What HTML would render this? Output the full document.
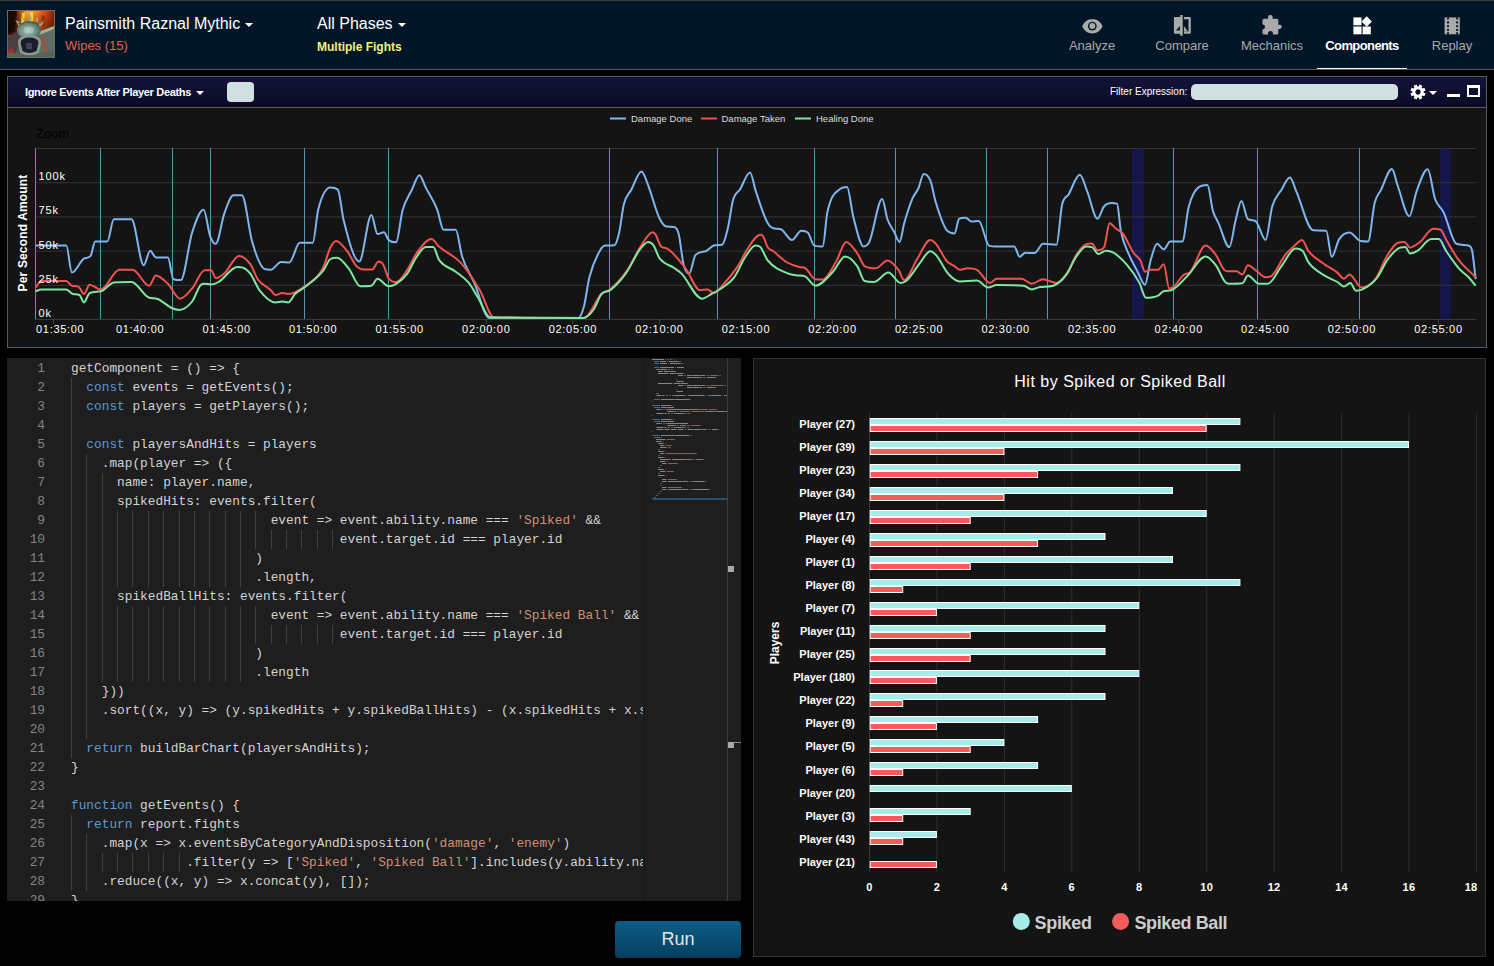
<!DOCTYPE html>
<html><head><meta charset="utf-8"><style>
html,body{margin:0;padding:0;background:#000;width:1494px;height:966px;overflow:hidden;position:relative;font-family:"Liberation Sans",sans-serif}
.t{position:absolute;white-space:nowrap}
.xl{font-size:11px;color:#fff;letter-spacing:0.7px;line-height:14px}
.yl{font-size:11px;color:#fff;letter-spacing:0.85px;line-height:14px}
.ln{position:absolute;left:7px;width:38px;text-align:right;font-family:"Liberation Mono",monospace;font-size:12.8px;line-height:19px;color:#858585;white-space:pre}
.cl{position:absolute;left:71px;font-family:"Liberation Mono",monospace;font-size:12.8px;line-height:19px;color:#d4d4d4;white-space:pre}
.k{color:#569cd6} .s{color:#ce9178}
.pl{font-size:11px;font-weight:bold;color:#fff;line-height:15px}
.al{font-size:11px;color:#fff;line-height:14px;font-weight:bold;letter-spacing:0.3px}
</style></head><body>

<div style="position:absolute;left:0;top:0;width:1494px;height:1px;background:#3a3a3a"></div>
<div style="position:absolute;left:0;top:1px;width:1494px;height:68px;background:#021628"></div>
<div style="position:absolute;left:0;top:69px;width:1494px;height:1px;background:#5a5a5a"></div>
<div style="position:absolute;left:7px;top:10px;width:46px;height:46px;border:1px solid #6a6a6a;overflow:hidden"><svg width="46" height="46" viewBox="0 0 46 46" style="position:absolute;left:0;top:0">
<defs>
<linearGradient id="fire" x1="0" y1="0" x2="1" y2="0">
<stop offset="0" stop-color="#1a0a08"/><stop offset="0.2" stop-color="#7a2a10"/><stop offset="0.4" stop-color="#ffb020"/><stop offset="0.55" stop-color="#ff9a18"/><stop offset="0.75" stop-color="#f05a10"/><stop offset="1" stop-color="#902008"/></linearGradient>
<linearGradient id="firev" x1="0" y1="0" x2="0" y2="1">
<stop offset="0" stop-color="#000" stop-opacity="0"/><stop offset="1" stop-color="#401008" stop-opacity="0.6"/></linearGradient>
<radialGradient id="helm" cx="0.45" cy="0.55" r="0.6"><stop offset="0" stop-color="#a8c4bc"/><stop offset="0.6" stop-color="#6e8c84"/><stop offset="1" stop-color="#445a52"/></radialGradient>
</defs>
<rect width="46" height="46" fill="#4a5850"/>
<rect x="0" y="0" width="46" height="24" fill="url(#fire)"/>
<rect x="0" y="0" width="46" height="24" fill="url(#firev)"/>
<path d="M14,2 L17,2 L16,12 L13,12Z" fill="#ffe030" opacity="0.85"/>
<path d="M22,1 L25,1 L25,10 L22,11Z" fill="#ffe840" opacity="0.8"/>
<path d="M34,4 L37,6 L36,16 L33,14Z" fill="#601808" opacity="0.5"/>
<path d="M0,26 L10,20 L14,24 L6,46 L0,46Z" fill="#4a4040"/>
<path d="M0,40 L4,36 L8,46 L0,46Z" fill="#b02828"/>
<path d="M30,22 L46,16 L46,46 L30,46Z" fill="#5e6e62"/>
<path d="M30,21 L46,15 L46,18 L31,24Z" fill="#a8b0a0"/>
<path d="M32,26 L36,26 L42,46 L38,46Z" fill="#a05040" opacity="0.8"/>
<path d="M9,12 L12,14 L11,16Z" fill="#c0b0a0"/>
<path d="M32,12 L30,16 L33,15Z" fill="#c0b0a0"/>
<path d="M21,6 L23,6 L22,12Z" fill="#a0a090"/>
<path d="M0,0 L9,0 L7,20 L0,22Z" fill="#140806" opacity="0.85"/>
<ellipse cx="21" cy="19" rx="12" ry="9" fill="url(#helm)"/>
<path d="M10,13 L7,9 L12,11Z M15,10 L14,5 L17,9Z M21,9 L22,3 L24,9Z M27,10 L30,5 L30,11Z M32,13 L36,9 L34,15Z" fill="#9aa898"/>
<path d="M12,14 Q21,8 31,14" fill="none" stroke="#3a4a40" stroke-width="1" opacity="0.6"/>
<path d="M16,17 Q21,14 26,17 L25,22 L17,22Z" fill="#c8e0da" opacity="0.4"/>
<path d="M10,32 Q10,24 21,24 Q33,24 33,32 L31,42 Q21,47 12,42 Z" fill="#8a9c90"/>
<path d="M12.5,32 Q13,26.5 21,26.5 Q30.5,26.5 30.5,32 L28.5,40 Q21,44 14.5,40 Z" fill="#1c1c2c"/>
<path d="M18,32 L24,32 L24,38 L18,38Z" fill="#4a4a5a" opacity="0.8"/>
<path d="M0,42 L12,42 Q21,47 31,42 L46,40 L46,46 L0,46Z" fill="#56645a"/>
</svg></div>
<div class="t" style="left:65px;top:14px;font-size:16px;color:#fff;line-height:19px">Painsmith Raznal Mythic</div>
<div style="position:absolute;left:245px;top:22.5px;width:0;height:0;border-left:4.0px solid transparent;border-right:4.0px solid transparent;border-top:4.5px solid #fff"></div>
<div class="t" style="left:65px;top:38px;font-size:13px;color:#e2633f;line-height:16px">Wipes (15)</div>
<div class="t" style="left:317px;top:14px;font-size:16px;color:#fff;line-height:19px">All Phases</div>
<div style="position:absolute;left:398px;top:22.5px;width:0;height:0;border-left:4.0px solid transparent;border-right:4.0px solid transparent;border-top:4.5px solid #fff"></div>
<div class="t" style="left:317px;top:39px;font-size:12px;font-weight:bold;color:#f0f27a;line-height:16px">Multiple Fights</div>
<div style="position:absolute;left:1092px;top:25.8px;width:0;height:0"><svg width="21" height="15" viewBox="0 0 21 15" style="position:absolute;left:-10.3px;top:-7.2px"><path d="M0.2,7.2 C2.5,2 6,0.2 10.3,0.2 C14.6,0.2 18.1,2 20.6,7.2 C18.1,12.4 14.6,14.4 10.3,14.4 C6,14.4 2.5,12.4 0.2,7.2Z" fill="#aaa"/><circle cx="10.3" cy="7.1" r="4.4" fill="#021628"/><circle cx="10.3" cy="7.1" r="3" fill="#aaa"/></svg></div><div class="t" style="left:1032px;top:38px;width:120px;text-align:center;font-size:13px;color:#a9a9a9;font-weight:normal;letter-spacing:0;line-height:16px">Analyze</div><div style="position:absolute;left:1182px;top:25.6px;width:0;height:0"><svg width="19" height="21" viewBox="0 0 19 21" style="position:absolute;left:-9px;top:-10.5px"><rect x="0.9" y="1.9" width="7.6" height="16.9" rx="1.3" fill="#aaa"/><path d="M3,15.6 L6.9,11 L6.9,15.6Z" fill="#021628"/><rect x="7.2" y="0" width="2.5" height="20.7" fill="#aaa"/><path d="M10.9,1.9 L16.5,1.9 Q17.8,1.9 17.8,3.2 L17.8,17.5 Q17.8,18.8 16.5,18.8 L10.9,18.8 L10.9,16.5 L15.5,16.5 L15.5,4.2 L10.9,4.2 Z" fill="#aaa"/><path d="M10.9,11 L14.8,16.5 L10.9,16.5Z" fill="#aaa"/></svg></div><div class="t" style="left:1122px;top:38px;width:120px;text-align:center;font-size:13px;color:#a9a9a9;font-weight:normal;letter-spacing:0;line-height:16px">Compare</div><div style="position:absolute;left:1272px;top:25.2px;width:0;height:0"><svg width="21" height="21" viewBox="0 0 21 21" style="position:absolute;left:-10px;top:-10px"><rect x="0.5" y="3.8" width="15.8" height="15.8" rx="1.5" fill="#aaa"/><rect x="6" y="0" width="4.7" height="5" rx="2.2" fill="#aaa"/><rect x="14" y="9.7" width="5.7" height="4.2" rx="1.8" fill="#aaa"/><circle cx="0.6" cy="12" r="2.4" fill="#021628"/><rect x="6" y="15.9" width="5" height="5" rx="2.5" fill="#021628"/></svg></div><div class="t" style="left:1212px;top:38px;width:120px;text-align:center;font-size:13px;color:#a9a9a9;font-weight:normal;letter-spacing:0;line-height:16px">Mechanics</div><div style="position:absolute;left:1362px;top:25.1px;width:0;height:0"><svg width="20" height="20" viewBox="0 0 20 20" style="position:absolute;left:-9.5px;top:-9.5px"><rect x="0.4" y="1.4" width="8.1" height="7.9" fill="#fff"/><path d="M13.7,0.3 L18.9,5.5 L13.7,10.7 L8.5,5.5Z" fill="#fff"/><rect x="0.4" y="10.5" width="8.1" height="7.8" fill="#fff"/><rect x="9.6" y="10.5" width="8.2" height="7.8" fill="#fff"/></svg></div><div class="t" style="left:1302px;top:38px;width:120px;text-align:center;font-size:13px;color:#fff;font-weight:bold;letter-spacing:-0.6px;line-height:16px">Components</div><div style="position:absolute;left:1452px;top:25.6px;width:0;height:0"><svg width="17" height="18" viewBox="0 0 17 18" style="position:absolute;left:-8px;top:-9px"><rect x="0.6" y="0.4" width="15.2" height="16.9" fill="#aaa"/><rect x="3" y="0.4" width="2" height="2" fill="#021628"/><rect x="12.1" y="0.4" width="2" height="2" fill="#021628"/><rect x="3" y="4.4" width="2" height="2" fill="#021628"/><rect x="12.1" y="4.4" width="2" height="2" fill="#021628"/><rect x="3" y="8.3" width="2" height="1.9" fill="#021628"/><rect x="12.1" y="8.3" width="2" height="1.9" fill="#021628"/><rect x="3" y="12" width="2" height="1.9" fill="#021628"/><rect x="12.1" y="12" width="2" height="1.9" fill="#021628"/><rect x="3" y="15.3" width="2" height="2" fill="#021628"/><rect x="12.1" y="15.3" width="2" height="2" fill="#021628"/></svg></div><div class="t" style="left:1392px;top:38px;width:120px;text-align:center;font-size:13px;color:#a9a9a9;font-weight:normal;letter-spacing:0;line-height:16px">Replay</div><div style="position:absolute;left:1317px;top:68px;width:90px;height:1px;background:#fff"></div>


<div style="position:absolute;left:7px;top:76px;width:1478px;height:270px;border:1px solid #5a5a5a;background:#141414"></div>
<div style="position:absolute;left:8px;top:77px;width:1478px;height:30px;background:linear-gradient(#13133a,#0b0b25)"></div>
<div style="position:absolute;left:8px;top:107px;width:1478px;height:1px;background:#5a5a5a"></div>
<div class="t" style="left:25px;top:85px;font-size:11px;font-weight:bold;color:#fff;letter-spacing:-0.33px;line-height:14px">Ignore Events After Player Deaths</div>
<div style="position:absolute;left:196px;top:91px;width:0;height:0;border-left:4.0px solid transparent;border-right:4.0px solid transparent;border-top:4px solid #fff"></div>
<div style="position:absolute;left:227px;top:82px;width:27px;height:20px;border-radius:4px;background:#cfdfe2"></div>
<div class="t" style="left:1110px;top:85px;font-size:10px;color:#fff;line-height:13px">Filter Expression:</div>
<div style="position:absolute;left:1191px;top:84px;width:207px;height:16px;border-radius:5px;background:#cfdfe2"></div>
<svg width="18" height="18" viewBox="-9 -9 18 18" style="position:absolute;left:1409px;top:82.5px;transform:rotate(22.5deg)"><path d="M5.36,-1.64 L7.53,-1.60 L7.53,1.60 L5.36,1.64 L4.94,2.63 L6.46,4.19 L4.19,6.46 L2.63,4.94 L1.64,5.36 L1.60,7.53 L-1.60,7.53 L-1.64,5.36 L-2.63,4.94 L-4.19,6.46 L-6.46,4.19 L-4.94,2.63 L-5.36,1.64 L-7.53,1.60 L-7.53,-1.60 L-5.36,-1.64 L-4.94,-2.63 L-6.46,-4.19 L-4.19,-6.46 L-2.63,-4.94 L-1.64,-5.36 L-1.60,-7.53 L1.60,-7.53 L1.64,-5.36 L2.63,-4.94 L4.19,-6.46 L6.46,-4.19 L4.94,-2.63Z" fill="#fff"/><circle r="2.6" fill="#0f0f2b"/></svg>
<div style="position:absolute;left:1429px;top:91px;width:0;height:0;border-left:4.0px solid transparent;border-right:4.0px solid transparent;border-top:4px solid #fff"></div>
<div style="position:absolute;left:1447px;top:94px;width:13px;height:3px;background:#fff"></div>
<div style="position:absolute;left:1467px;top:85px;width:9px;height:7px;border:2px solid #fff;border-top-width:3px"></div>
<div class="t" style="left:36px;top:126px;font-size:13px;color:#000;line-height:16px">Zoom</div>
<svg width="1494" height="360" style="position:absolute;left:0;top:0">
<rect x="1132" y="148" width="12" height="171" fill="#15154a"/><rect x="1440" y="148" width="11" height="171" fill="#15154a"/><line x1="35" y1="148.5" x2="1476" y2="148.5" stroke="#333" stroke-width="1"/><line x1="35" y1="182.7" x2="1476" y2="182.7" stroke="#333" stroke-width="1"/><line x1="35" y1="216.9" x2="1476" y2="216.9" stroke="#333" stroke-width="1"/><line x1="35" y1="251.1" x2="1476" y2="251.1" stroke="#333" stroke-width="1"/><line x1="35" y1="285.3" x2="1476" y2="285.3" stroke="#333" stroke-width="1"/><line x1="35" y1="319.5" x2="1476" y2="319.5" stroke="#3a3a3a" stroke-width="1"/><line x1="35.5" y1="148" x2="35.5" y2="319" stroke="#4f9ab1" stroke-width="1"/><line x1="100.5" y1="148" x2="100.5" y2="319" stroke="#4f9ab1" stroke-width="1"/><line x1="172.5" y1="148" x2="172.5" y2="319" stroke="#4f9ab1" stroke-width="1"/><line x1="210.5" y1="148" x2="210.5" y2="319" stroke="#4f9ab1" stroke-width="1"/><line x1="304.5" y1="148" x2="304.5" y2="319" stroke="#4f9ab1" stroke-width="1"/><line x1="388.5" y1="148" x2="388.5" y2="319" stroke="#4f9ab1" stroke-width="1"/><line x1="609.5" y1="148" x2="609.5" y2="319" stroke="#4f9ab1" stroke-width="1"/><line x1="717.5" y1="148" x2="717.5" y2="319" stroke="#4f9ab1" stroke-width="1"/><line x1="814.5" y1="148" x2="814.5" y2="319" stroke="#4f9ab1" stroke-width="1"/><line x1="895.5" y1="148" x2="895.5" y2="319" stroke="#4f9ab1" stroke-width="1"/><line x1="986.5" y1="148" x2="986.5" y2="319" stroke="#4f9ab1" stroke-width="1"/><line x1="1047.5" y1="148" x2="1047.5" y2="319" stroke="#4f9ab1" stroke-width="1"/><line x1="1173.5" y1="148" x2="1173.5" y2="319" stroke="#4f9ab1" stroke-width="1"/><line x1="1257.5" y1="148" x2="1257.5" y2="319" stroke="#4f9ab1" stroke-width="1"/><line x1="1359.5" y1="148" x2="1359.5" y2="319" stroke="#4f9ab1" stroke-width="1"/><line x1="53.5" y1="319" x2="53.5" y2="324" stroke="#444" stroke-width="1"/><line x1="140.1" y1="319" x2="140.1" y2="324" stroke="#444" stroke-width="1"/><line x1="226.6" y1="319" x2="226.6" y2="324" stroke="#444" stroke-width="1"/><line x1="313.2" y1="319" x2="313.2" y2="324" stroke="#444" stroke-width="1"/><line x1="399.7" y1="319" x2="399.7" y2="324" stroke="#444" stroke-width="1"/><line x1="486.3" y1="319" x2="486.3" y2="324" stroke="#444" stroke-width="1"/><line x1="572.9" y1="319" x2="572.9" y2="324" stroke="#444" stroke-width="1"/><line x1="659.4" y1="319" x2="659.4" y2="324" stroke="#444" stroke-width="1"/><line x1="746.0" y1="319" x2="746.0" y2="324" stroke="#444" stroke-width="1"/><line x1="832.5" y1="319" x2="832.5" y2="324" stroke="#444" stroke-width="1"/><line x1="919.1" y1="319" x2="919.1" y2="324" stroke="#444" stroke-width="1"/><line x1="1005.7" y1="319" x2="1005.7" y2="324" stroke="#444" stroke-width="1"/><line x1="1092.2" y1="319" x2="1092.2" y2="324" stroke="#444" stroke-width="1"/><line x1="1178.8" y1="319" x2="1178.8" y2="324" stroke="#444" stroke-width="1"/><line x1="1265.3" y1="319" x2="1265.3" y2="324" stroke="#444" stroke-width="1"/><line x1="1351.9" y1="319" x2="1351.9" y2="324" stroke="#444" stroke-width="1"/><line x1="1438.5" y1="319" x2="1438.5" y2="324" stroke="#444" stroke-width="1"/>
<path d="M35.6,245.6C45.8,245.6 56.1,245.6 66.3,245.6C68.2,245.6 70.0,272.6 71.9,272.6C75.9,272.6 80.0,260.8 84.0,258.7C86.2,257.6 88.4,258.5 90.6,255.9C92.1,254.1 93.7,241.5 95.2,241.5C99.2,241.5 103.3,241.5 107.3,241.5C109.5,241.5 111.6,219.2 113.8,219.2C119.7,219.2 125.6,219.2 131.5,219.2C135.6,219.2 139.6,265.2 143.7,265.2C145.9,265.2 148.0,250.8 150.2,250.8C152.1,250.8 153.9,257.4 155.8,257.4C159.8,257.4 163.9,257.4 167.9,257.4C169.8,257.4 171.6,278.5 173.5,279.2C176.0,280.1 178.4,280.1 180.9,280.1C184.6,280.1 188.4,244.2 192.1,232.6C196.0,220.6 199.8,209.8 203.7,209.8C205.9,209.8 208.0,230.4 210.2,236.3C212.1,241.4 213.9,243.8 215.8,243.8C218.6,243.8 221.4,221.7 224.2,213.9C227.3,205.3 230.4,195.3 233.5,195.3C236.3,195.3 239.1,195.3 241.9,195.3C245.3,195.3 248.8,230.3 252.2,241.9C256.2,255.5 260.3,267.2 264.3,268.9C266.5,269.8 268.6,269.8 270.8,269.8C274.2,269.8 277.6,262.0 281.0,262.0C283.8,262.0 286.6,262.4 289.4,262.4C292.8,262.4 296.3,242.8 299.7,242.8C304.0,242.8 308.4,242.8 312.7,242.8C314.6,242.8 316.4,216.6 318.3,209.3C322.3,193.6 326.4,187.5 330.4,187.5C332.9,187.5 335.4,187.5 337.9,189.7C339.8,191.3 341.6,212.1 343.5,219.5C348.8,240.5 354.0,261.5 359.3,261.5C363.3,261.5 367.4,214.9 371.4,214.9C373.4,214.9 375.5,234.1 377.5,234.1C379.7,234.1 381.8,232.2 384.0,232.2C385.5,232.2 387.1,238.6 388.6,240.0C391.1,242.3 393.6,242.3 396.1,242.3C398.3,242.3 400.4,217.9 402.6,210.2C405.7,199.1 408.8,196.1 411.9,189.7C414.4,184.5 416.9,175.2 419.4,175.2C421.6,175.2 423.7,183.7 425.9,187.9C429.6,195.1 433.4,199.8 437.1,209.3C439.3,214.8 441.4,229.8 443.6,229.8C447.6,229.8 451.7,229.8 455.7,229.8C457.9,229.8 460.0,250.0 462.2,256.8C466.2,269.5 470.3,273.8 474.3,282.9C479.3,294.1 484.2,317.9 489.2,317.9C518.9,317.9 548.5,317.9 578.2,317.9C580.1,317.9 581.9,313.9 583.8,307.1C585.7,300.3 587.5,284.7 589.4,277.3C592.8,263.9 596.2,257.2 599.6,251.2C601.5,247.9 603.3,245.7 605.2,245.6C608.3,245.5 611.4,245.6 614.5,245.2C616.1,245.0 617.6,239.5 619.2,232.6C620.7,225.9 622.3,210.8 623.8,204.6C626.3,194.5 628.8,194.4 631.3,189.7C634.7,183.3 638.1,171.5 641.5,171.5C643.7,171.5 645.9,179.6 648.1,185.1C651.8,194.3 655.5,210.1 659.2,217.7C661.7,222.9 664.2,226.4 666.7,226.6C669.2,226.8 671.7,226.7 674.2,227.0C675.7,227.2 677.3,228.3 678.8,234.4C680.4,240.6 681.9,257.9 683.5,264.2C685.4,271.7 687.2,273.6 689.1,273.6C691.3,273.6 693.4,257.1 695.6,254.9C699.0,251.4 702.4,252.3 705.8,251.2C708.8,250.2 711.7,245.3 714.7,245.2C717.2,245.1 719.6,245.2 722.1,244.7C724.0,244.3 725.8,236.4 727.7,228.8C729.6,221.2 731.4,205.3 733.3,199.0C735.5,191.7 737.6,193.0 739.8,189.7C743.2,184.4 746.7,172.6 750.1,172.6C751.9,172.6 753.8,185.1 755.6,190.6C759.7,202.7 763.7,216.2 767.8,223.3C770.0,227.1 772.1,228.0 774.3,228.5C776.5,229.0 778.6,228.7 780.8,229.2C784.5,230.1 788.3,240.0 792.0,240.0C795.1,240.0 798.2,230.7 801.3,230.7C803.5,230.7 805.6,230.7 807.8,232.6C810.0,234.5 812.1,244.9 814.3,245.6C817.1,246.5 819.9,246.5 822.7,246.5C824.3,246.5 825.8,219.2 827.4,212.1C831.7,192.4 836.1,192.5 840.4,188.8C842.6,186.9 844.8,186.9 847.0,186.9C849.2,186.9 851.3,209.5 853.5,217.7C856.9,230.6 860.3,246.5 863.7,246.5C865.6,246.5 867.4,245.8 869.3,241.9C873.6,233.0 877.9,199.0 882.2,199.0C884.0,199.0 885.7,214.4 887.5,219.5C889.7,225.7 891.8,227.6 894.0,231.6C895.9,235.1 897.7,241.9 899.6,241.9C901.1,241.9 902.7,228.7 904.2,223.3C907.0,213.4 909.8,204.6 912.6,198.1C914.5,193.7 916.3,192.8 918.2,188.8C920.1,184.8 921.9,173.9 923.8,173.9C926.0,173.9 928.1,175.0 930.3,180.4C932.2,185.1 934.0,196.7 935.9,202.8C939.6,214.9 943.4,226.5 947.1,230.7C949.6,233.5 952.0,233.5 954.5,233.5C956.1,233.5 957.6,219.3 959.2,218.6C961.4,217.7 963.5,217.7 965.7,217.7C967.6,217.7 969.4,221.4 971.3,221.4C973.8,221.4 976.3,221.0 978.8,221.0C982.2,221.0 985.6,244.4 989.0,245.6C991.5,246.5 994.0,246.5 996.5,246.5C1002.4,246.5 1008.3,246.5 1014.2,246.5C1016.0,246.5 1017.9,256.8 1019.7,256.8C1021.6,256.8 1023.4,252.7 1025.3,252.7C1028.4,252.7 1031.5,253.1 1034.6,253.1C1037.4,253.1 1040.2,243.8 1043.0,243.8C1047.5,243.8 1052.0,244.7 1056.5,244.7C1058.4,244.7 1060.2,212.7 1062.1,204.6C1064.3,195.1 1066.4,198.0 1068.6,194.4C1072.3,188.2 1076.1,174.8 1079.8,174.8C1082.3,174.8 1084.8,185.5 1087.3,191.6C1090.7,199.9 1094.1,218.6 1097.5,218.6C1099.7,218.6 1101.8,209.0 1104.0,206.5C1106.5,203.6 1109.0,203.1 1111.5,203.1C1113.4,203.1 1115.2,203.1 1117.1,203.7C1118.3,204.1 1119.6,224.4 1120.8,230.7C1123.3,243.6 1125.8,246.9 1128.3,253.1C1131.4,260.8 1134.5,265.9 1137.6,271.7C1140.1,276.3 1142.5,284.7 1145.0,284.7C1146.9,284.7 1148.7,266.9 1150.6,260.5C1152.8,253.0 1154.9,243.8 1157.1,243.8C1159.3,243.8 1161.5,249.3 1163.7,249.3C1165.9,249.3 1168.0,241.5 1170.2,241.5C1174.2,241.5 1178.3,241.5 1182.3,241.5C1184.5,241.5 1186.6,214.4 1188.8,206.5C1192.2,194.0 1195.7,189.1 1199.1,186.9C1201.9,185.1 1204.6,185.1 1207.4,185.1C1209.3,185.1 1211.1,204.7 1213.0,211.1C1214.9,217.5 1216.7,219.2 1218.6,223.3C1222.2,231.2 1225.7,247.1 1229.3,247.1C1231.5,247.1 1233.6,227.7 1235.8,219.5C1237.7,212.4 1239.5,200.9 1241.4,200.9C1243.6,200.9 1245.7,217.9 1247.9,219.2C1250.4,220.7 1252.9,220.0 1255.4,221.0C1258.8,222.4 1262.2,240.0 1265.6,240.0C1267.8,240.0 1270.0,214.1 1272.2,206.5C1275.3,195.8 1278.4,194.7 1281.5,189.7C1284.3,185.2 1287.1,177.6 1289.9,177.6C1292.1,177.6 1294.2,186.8 1296.4,191.6C1302.0,204.1 1307.6,230.1 1313.2,230.3C1317.5,230.5 1321.9,230.3 1326.2,230.7C1328.1,230.9 1329.9,256.8 1331.8,256.8C1334.3,256.8 1336.7,242.8 1339.2,239.1C1342.6,233.9 1346.1,232.6 1349.5,232.6C1353.2,232.6 1356.9,240.3 1360.6,241.0C1363.1,241.5 1365.6,241.5 1368.1,241.5C1370.3,241.5 1372.5,211.5 1374.7,202.8C1376.8,194.4 1379.0,193.9 1381.1,189.7C1384.7,182.5 1388.3,168.9 1391.9,168.9C1393.9,168.9 1395.8,180.6 1397.8,186.0C1401.7,196.6 1405.5,216.2 1409.4,216.2C1411.8,216.2 1414.1,198.1 1416.5,191.6C1420.2,181.4 1424.0,169.2 1427.7,169.2C1430.2,169.2 1432.6,192.1 1435.1,199.0C1437.9,206.8 1440.7,206.5 1443.5,212.1C1447.8,220.8 1452.2,242.1 1456.5,243.8C1460.5,245.3 1464.6,244.8 1468.6,245.6C1469.7,245.8 1470.9,245.6 1472.0,250.3C1473.2,255.4 1474.5,269.6 1475.7,279.2" fill="none" stroke="#7eb6ee" stroke-width="2" stroke-linejoin="round"/>
<path d="M35.6,287.5C37.5,285.3 39.3,281.0 41.2,281.0C49.6,281.0 57.9,281.0 66.3,281.0C68.2,281.0 70.0,285.3 71.9,285.7C74.1,286.2 76.2,285.9 78.4,286.6C80.3,287.2 82.1,294.0 84.0,294.0C85.9,294.0 87.7,284.7 89.6,284.7C93.3,284.7 97.1,289.4 100.8,289.4C107.0,289.4 113.2,269.8 119.4,269.8C123.8,269.8 128.1,269.8 132.5,269.8C138.1,269.8 143.6,285.7 149.2,285.7C151.4,285.7 153.6,275.4 155.8,275.4C159.8,275.4 163.9,279.9 167.9,283.8C171.9,287.7 176.0,298.7 180.0,298.7C184.0,298.7 188.1,293.1 192.1,288.5C196.3,283.7 200.5,270.2 204.7,270.2C206.9,270.2 209.0,270.2 211.2,270.2C212.7,270.2 214.3,278.2 215.8,278.2C218.6,278.2 221.4,276.0 224.2,273.6C229.2,269.3 234.1,255.9 239.1,255.9C242.8,255.9 246.6,259.1 250.3,264.2C252.8,267.6 255.3,275.6 257.8,279.2C262.1,285.4 266.5,286.3 270.8,290.3C272.4,291.8 273.9,295.0 275.5,295.0C277.7,295.0 279.8,293.1 282.0,293.1C284.2,293.1 286.3,294.0 288.5,294.0C293.8,294.0 299.0,290.5 304.3,286.6C310.5,282.0 316.8,279.7 323.0,268.0C325.5,263.4 327.9,252.3 330.4,247.5C332.3,243.8 334.1,241.0 336.0,241.0C339.7,241.0 343.5,246.5 347.2,251.2C350.3,255.1 353.4,262.9 356.5,266.1C359.0,268.7 361.5,269.5 364.0,269.5C366.8,269.5 369.5,269.5 372.3,269.5C374.3,269.5 376.4,261.5 378.4,261.5C379.9,261.5 381.5,261.8 383.0,264.2C384.9,267.1 386.7,275.4 388.6,278.2C391.1,282.0 393.6,282.0 396.1,282.0C399.8,282.0 403.6,275.2 407.3,269.8C410.4,265.3 413.5,257.3 416.6,253.1C421.6,246.3 426.5,239.1 431.5,239.1C434.0,239.1 436.4,244.3 438.9,246.5C446.4,253.0 453.8,255.1 461.3,263.3C467.5,270.1 473.7,279.8 479.9,290.3C484.6,298.2 489.2,317.2 493.9,317.3C523.9,317.9 553.8,317.9 583.8,317.9C589.7,317.9 595.6,299.6 601.5,294.0C604.3,291.3 607.1,291.7 609.9,289.4C615.8,284.5 621.7,278.4 627.6,269.8C631.9,263.5 636.3,252.9 640.6,246.5C644.6,240.5 648.7,232.2 652.7,232.2C653.6,232.2 654.6,233.0 655.5,234.4C657.4,237.2 659.2,244.8 661.1,246.5C663.0,248.2 664.8,247.5 666.7,248.4C672.9,251.5 679.1,260.1 685.3,268.0C690.3,274.3 695.2,290.3 700.2,290.3C702.7,290.3 705.2,289.4 707.7,289.4C709.7,289.4 711.7,293.1 713.7,293.1C716.8,293.1 719.9,288.0 723.0,284.7C728.0,279.4 732.9,273.6 737.9,266.1C741.0,261.3 744.2,253.8 747.3,249.3C751.6,243.0 756.0,234.8 760.3,234.8C761.2,234.8 762.2,234.9 763.1,236.3C764.7,238.6 766.2,245.1 767.8,247.5C769.7,250.3 771.5,249.8 773.4,251.2C777.7,254.4 782.1,259.4 786.4,262.0C790.7,264.6 795.1,266.1 799.4,267.0C801.3,267.4 803.1,267.1 805.0,268.0C808.4,269.7 811.9,278.8 815.3,279.2C817.8,279.5 820.2,279.5 822.7,279.5C827.4,279.5 832.0,268.3 836.7,260.5C839.8,255.3 842.9,241.9 846.0,241.9C849.7,241.9 853.5,248.0 857.2,253.1C859.7,256.5 862.1,264.6 864.6,266.1C868.3,268.3 872.1,268.3 875.8,268.3C879.7,268.3 883.6,260.5 887.5,260.5C891.2,260.5 894.9,265.3 898.6,270.2C900.5,272.7 902.3,280.1 904.2,280.1C908.6,280.1 912.9,265.4 917.3,258.7C921.6,252.0 926.0,240.0 930.3,240.0C932.2,240.0 934.0,241.7 935.9,243.8C939.6,248.0 943.4,257.4 947.1,261.5C949.6,264.2 952.0,264.5 954.5,266.1C956.4,267.3 958.2,269.8 960.1,269.8C962.6,269.8 965.1,268.3 967.6,268.3C970.7,268.3 973.8,268.3 976.9,269.8C981.3,271.9 985.6,282.9 990.0,282.9C992.2,282.9 994.3,278.8 996.5,278.8C1004.9,278.8 1013.2,278.8 1021.6,278.8C1025.0,278.8 1028.5,283.8 1031.9,283.8C1035.6,283.8 1039.3,279.2 1043.0,279.2C1047.5,279.2 1052.0,282.9 1056.5,282.9C1060.5,282.9 1064.6,278.2 1068.6,271.7C1070.5,268.7 1072.3,262.0 1074.2,258.7C1077.9,252.0 1081.7,246.9 1085.4,244.7C1087.6,243.4 1089.7,243.4 1091.9,243.4C1093.8,243.4 1095.6,250.3 1097.5,250.3C1099.7,250.3 1101.8,250.3 1104.0,247.5C1105.9,245.1 1107.7,223.3 1109.6,223.3C1111.8,223.3 1113.9,227.1 1116.1,228.8C1118.3,230.5 1120.5,230.8 1122.7,233.5C1126.4,238.1 1130.1,247.8 1133.8,253.1C1136.0,256.3 1138.2,256.6 1140.4,260.5C1141.9,263.2 1143.5,271.7 1145.0,271.7C1146.9,271.7 1148.7,269.8 1150.6,269.8C1153.1,269.8 1155.6,269.8 1158.1,269.8C1160.0,269.8 1161.8,264.2 1163.7,264.2C1165.5,264.2 1167.4,288.5 1169.2,288.5C1170.8,288.5 1172.3,287.8 1173.9,286.6C1177.3,283.9 1180.8,276.6 1184.2,274.5C1186.0,273.4 1187.9,274.1 1189.7,272.6C1195.0,268.2 1200.3,245.6 1205.6,245.6C1209.0,245.6 1212.4,250.3 1215.8,254.9C1218.6,258.7 1221.4,266.7 1224.2,269.8C1225.3,271.0 1226.4,271.3 1227.5,271.3C1230.6,271.3 1233.7,271.3 1236.8,271.3C1238.7,271.3 1240.5,274.5 1242.4,274.5C1244.2,274.5 1246.1,265.2 1247.9,265.2C1251.0,265.2 1254.2,269.6 1257.3,271.7C1260.1,273.6 1262.8,277.3 1265.6,277.3C1267.8,277.3 1270.0,277.3 1272.2,275.4C1276.5,271.7 1280.9,260.5 1285.2,254.9C1288.3,250.9 1291.4,248.3 1294.5,245.6C1297.0,243.4 1299.5,240.0 1302.0,240.0C1304.2,240.0 1306.3,248.4 1308.5,251.2C1313.8,257.9 1319.0,260.3 1324.3,264.2C1328.7,267.4 1333.0,269.1 1337.4,272.6C1339.6,274.3 1341.7,278.8 1343.9,278.8C1345.8,278.8 1347.6,274.5 1349.5,274.5C1353.5,274.5 1357.5,287.5 1361.5,287.5C1366.2,287.5 1370.8,285.3 1375.5,279.2C1379.2,274.3 1383.0,262.5 1386.7,256.4C1390.4,250.4 1394.1,244.3 1397.8,242.8C1400.0,241.9 1402.2,241.9 1404.4,241.9C1406.3,241.9 1408.1,247.5 1410.0,247.5C1413.4,247.5 1416.8,244.5 1420.2,241.9C1424.5,238.5 1428.9,228.8 1433.2,228.8C1435.7,228.8 1438.2,228.8 1440.7,229.8C1442.6,230.5 1444.4,236.8 1446.3,240.0C1450.3,246.9 1454.4,254.3 1458.4,259.6C1464.2,267.2 1469.9,271.4 1475.7,277.3" fill="none" stroke="#f0524d" stroke-width="2" stroke-linejoin="round"/>
<path d="M35.6,291.3C37.5,290.7 39.3,289.4 41.2,289.4C49.6,289.4 57.9,289.4 66.3,289.4C68.5,289.4 70.7,293.6 72.9,294.0C75.1,294.4 77.2,294.1 79.4,295.0C80.9,295.6 82.5,302.4 84.0,302.4C85.9,302.4 87.7,293.9 89.6,293.1C93.3,291.5 97.1,292.1 100.8,291.3C105.1,290.4 109.5,282.9 113.8,282.5C119.7,282.0 125.6,282.0 131.5,282.0C137.4,282.0 143.3,296.1 149.2,297.8C151.7,298.5 154.2,298.2 156.7,298.7C161.7,299.8 166.6,305.8 171.6,308.0C174.1,309.1 176.6,309.9 179.1,309.9C183.4,309.9 187.8,306.9 192.1,301.5C195.2,297.6 198.3,286.1 201.4,284.4C202.5,283.8 203.6,283.8 204.7,283.8C206.9,283.8 209.0,284.4 211.2,284.4C213.7,284.4 216.1,283.4 218.6,282.0C224.8,278.5 231.1,267.0 237.3,267.0C239.2,267.0 241.0,267.0 242.9,267.6C245.4,268.4 247.8,270.4 250.3,273.6C253.4,277.6 256.5,286.3 259.6,290.3C264.9,297.1 270.2,302.4 275.5,302.4C277.7,302.4 279.8,301.5 282.0,301.5C284.2,301.5 286.3,302.4 288.5,302.4C290.7,302.4 292.8,296.2 295.0,294.0C298.1,290.9 301.2,290.0 304.3,287.5C310.5,282.5 316.8,278.6 323.0,270.8C325.5,267.7 327.9,260.5 330.4,259.0C332.6,257.7 334.8,257.7 337.0,257.7C341.0,257.7 345.0,263.9 349.0,268.9C352.7,273.5 356.5,286.2 360.2,286.2C363.9,286.2 367.7,286.2 371.4,285.7C373.4,285.4 375.5,278.8 377.5,278.8C381.2,278.8 384.9,286.2 388.6,286.2C391.1,286.2 393.6,285.3 396.1,283.8C399.8,281.5 403.6,278.7 407.3,273.6C410.4,269.4 413.5,261.2 416.6,256.8C419.7,252.4 422.8,247.1 425.9,247.1C428.4,247.1 430.8,247.1 433.3,247.1C435.2,247.1 437.0,256.8 438.9,259.6C444.5,267.9 450.1,267.3 455.7,271.7C460.1,275.1 464.4,277.5 468.8,282.9C471.9,286.7 475.0,292.8 478.1,297.8C482.1,304.3 486.2,317.2 490.2,317.3C521.4,317.9 552.6,317.9 583.8,317.9C587.2,317.9 590.6,313.9 594.0,309.0C596.5,305.4 599.0,296.8 601.5,294.0C604.3,290.8 607.1,292.2 609.9,290.3C615.2,286.7 620.4,280.8 625.7,273.6C630.7,266.8 635.6,254.8 640.6,248.4C643.1,245.2 645.6,241.9 648.1,241.9C650.0,241.9 651.8,242.9 653.7,245.6C655.5,248.2 657.4,255.1 659.2,257.7C664.2,264.9 669.2,264.4 674.2,268.0C676.7,269.8 679.1,271.2 681.6,273.6C688.4,280.4 695.3,298.7 702.1,298.7C705.2,298.7 708.3,295.7 711.4,294.0C714.7,292.3 717.9,290.8 721.2,288.5C725.5,285.4 729.9,283.1 734.2,277.3C737.9,272.3 741.7,262.3 745.4,256.8C748.8,251.8 752.2,245.6 755.6,245.6C757.2,245.6 758.7,245.6 760.3,247.1C762.8,249.5 765.3,257.5 767.8,260.5C774.6,268.8 781.5,270.8 788.3,273.6C791.4,274.9 794.5,275.0 797.6,275.4C800.1,275.7 802.5,275.4 805.0,276.4C808.4,277.7 811.9,285.7 815.3,285.7C821.2,285.7 827.1,277.8 833.0,271.7C837.0,267.6 841.1,256.4 845.1,256.4C849.1,256.4 853.2,260.4 857.2,266.1C859.7,269.6 862.1,280.2 864.6,281.0C867.7,282.0 870.9,282.0 874.0,282.0C878.8,282.0 883.6,272.6 888.4,272.6C892.4,272.6 896.5,282.9 900.5,282.9C902.4,282.9 904.2,282.5 906.1,281.0C910.4,277.5 914.8,269.5 919.1,264.2C922.8,259.6 926.6,251.2 930.3,251.2C932.2,251.2 934.0,252.9 935.9,254.9C940.2,259.6 944.6,269.9 948.9,274.5C952.6,278.5 956.4,281.4 960.1,281.4C965.7,281.4 971.3,280.6 976.9,280.6C980.6,280.6 984.4,287.5 988.1,287.5C990.9,287.5 993.7,285.1 996.5,285.1C1005.5,285.1 1014.5,285.1 1023.5,285.7C1026.3,285.9 1029.1,289.4 1031.9,289.4C1034.7,289.4 1037.4,287.3 1040.2,287.0C1044.6,286.5 1048.9,286.9 1053.3,285.7C1057.8,284.5 1062.3,279.7 1066.8,273.6C1069.9,269.4 1073.0,261.2 1076.1,256.8C1079.5,252.0 1082.9,246.5 1086.3,246.5C1088.2,246.5 1090.0,246.5 1091.9,247.1C1094.1,247.8 1096.2,254.0 1098.4,254.0C1100.9,254.0 1103.4,250.8 1105.9,250.8C1108.4,250.8 1110.9,251.3 1113.4,252.7C1117.7,255.2 1122.1,259.2 1126.4,264.2C1130.7,269.2 1135.1,274.9 1139.4,282.9C1141.6,287.0 1143.8,297.8 1146.0,297.8C1150.0,297.8 1154.1,297.5 1158.1,295.6C1160.0,294.7 1161.8,291.8 1163.7,291.3C1166.2,290.6 1168.6,291.0 1171.1,290.3C1176.7,288.6 1182.3,280.9 1187.9,275.4C1193.8,269.6 1199.7,256.4 1205.6,256.4C1209.0,256.4 1212.4,260.7 1215.8,265.2C1218.9,269.3 1222.0,278.4 1225.1,281.9C1226.5,283.5 1227.9,283.8 1229.3,283.8C1233.7,283.8 1238.0,283.8 1242.4,283.3C1244.2,283.1 1246.1,275.4 1247.9,275.4C1251.6,275.4 1255.4,283.8 1259.1,283.8C1261.9,283.8 1264.7,283.8 1267.5,283.8C1272.2,283.8 1276.8,272.0 1281.5,266.1C1286.2,260.2 1290.8,248.4 1295.5,248.4C1298.0,248.4 1300.4,248.4 1302.9,251.2C1304.8,253.3 1306.6,259.8 1308.5,262.4C1313.8,269.8 1319.0,271.9 1324.3,275.4C1328.7,278.3 1333.0,279.4 1337.4,282.0C1339.6,283.3 1341.7,286.6 1343.9,286.6C1346.0,286.6 1348.2,282.9 1350.3,282.9C1352.2,282.9 1354.0,290.7 1355.9,290.7C1358.1,290.7 1360.2,290.5 1362.4,289.4C1367.4,286.9 1372.4,283.7 1377.4,277.3C1380.8,273.0 1384.2,264.1 1387.6,259.6C1391.9,253.8 1396.3,248.6 1400.6,247.5C1402.2,247.1 1403.7,247.1 1405.3,247.1C1406.9,247.1 1408.4,253.4 1410.0,253.4C1412.5,253.4 1414.9,252.3 1417.4,250.8C1422.1,248.0 1426.7,239.1 1431.4,239.1C1433.9,239.1 1436.3,239.1 1438.8,239.1C1441.3,239.1 1443.8,247.5 1446.3,251.2C1450.6,257.6 1455.0,264.0 1459.3,268.9C1462.4,272.4 1465.5,274.1 1468.6,277.3C1471.0,279.8 1473.3,282.9 1475.7,285.7" fill="none" stroke="#80e6a0" stroke-width="2" stroke-linejoin="round"/>
<line x1="610" y1="118.5" x2="626" y2="118.5" stroke="#7eb6ee" stroke-width="2"/>
<line x1="701" y1="118.5" x2="717" y2="118.5" stroke="#f0524d" stroke-width="2"/>
<line x1="795" y1="118.5" x2="811" y2="118.5" stroke="#80e6a0" stroke-width="2"/>
</svg>
<div style="position:absolute;left:8px;top:346px;width:1478px;height:1px;background:#021628"></div>
<div class="t" style="left:631px;top:111.5px;font-size:9.5px;color:#ddd;line-height:13px">Damage Done</div>
<div class="t" style="left:721.5px;top:111.5px;font-size:9.5px;color:#ddd;line-height:13px">Damage Taken</div>
<div class="t" style="left:816px;top:111.5px;font-size:9.5px;color:#ddd;line-height:13px">Healing Done</div>
<div class="t" style="left:23px;top:233px;width:0;height:0"><div style="position:absolute;left:-60px;top:-8px;width:120px;text-align:center;transform:rotate(-90deg);font-size:12px;font-weight:bold;color:#fff;letter-spacing:0.15px;line-height:16px;white-space:nowrap">Per Second Amount</div></div>
<div class="t yl" style="left:38.5px;top:169.2px">100k</div><div class="t yl" style="left:38.5px;top:203.4px">75k</div><div class="t yl" style="left:38.5px;top:237.6px">50k</div><div class="t yl" style="left:38.5px;top:271.8px">25k</div><div class="t yl" style="left:38.5px;top:306.0px">0k</div><div class="t xl" style="left:36px;top:322px">01:35:00</div><div class="t xl" style="left:100.1px;top:322px;width:80px;text-align:center">01:40:00</div><div class="t xl" style="left:186.6px;top:322px;width:80px;text-align:center">01:45:00</div><div class="t xl" style="left:273.2px;top:322px;width:80px;text-align:center">01:50:00</div><div class="t xl" style="left:359.7px;top:322px;width:80px;text-align:center">01:55:00</div><div class="t xl" style="left:446.3px;top:322px;width:80px;text-align:center">02:00:00</div><div class="t xl" style="left:532.9px;top:322px;width:80px;text-align:center">02:05:00</div><div class="t xl" style="left:619.4px;top:322px;width:80px;text-align:center">02:10:00</div><div class="t xl" style="left:706.0px;top:322px;width:80px;text-align:center">02:15:00</div><div class="t xl" style="left:792.5px;top:322px;width:80px;text-align:center">02:20:00</div><div class="t xl" style="left:879.1px;top:322px;width:80px;text-align:center">02:25:00</div><div class="t xl" style="left:965.7px;top:322px;width:80px;text-align:center">02:30:00</div><div class="t xl" style="left:1052.2px;top:322px;width:80px;text-align:center">02:35:00</div><div class="t xl" style="left:1138.8px;top:322px;width:80px;text-align:center">02:40:00</div><div class="t xl" style="left:1225.3px;top:322px;width:80px;text-align:center">02:45:00</div><div class="t xl" style="left:1311.9px;top:322px;width:80px;text-align:center">02:50:00</div><div class="t xl" style="left:1398.5px;top:322px;width:80px;text-align:center">02:55:00</div>


<div style="position:absolute;left:7px;top:358px;width:734px;height:543px;background:#1e1e1e;overflow:hidden">
</div>
<div style="position:absolute;left:644px;top:358px;width:1px;height:543px;background:#171717"></div>
<div style="position:absolute;left:71.0px;top:378px;width:1px;height:19px;background:#404040"></div><div style="position:absolute;left:71.0px;top:397px;width:1px;height:19px;background:#404040"></div><div style="position:absolute;left:71.0px;top:416px;width:1px;height:19px;background:#404040"></div><div style="position:absolute;left:71.0px;top:435px;width:1px;height:19px;background:#404040"></div><div style="position:absolute;left:71.0px;top:454px;width:1px;height:19px;background:#404040"></div><div style="position:absolute;left:86.4px;top:454px;width:1px;height:19px;background:#404040"></div><div style="position:absolute;left:71.0px;top:473px;width:1px;height:19px;background:#404040"></div><div style="position:absolute;left:86.4px;top:473px;width:1px;height:19px;background:#404040"></div><div style="position:absolute;left:101.7px;top:473px;width:1px;height:19px;background:#404040"></div><div style="position:absolute;left:71.0px;top:492px;width:1px;height:19px;background:#404040"></div><div style="position:absolute;left:86.4px;top:492px;width:1px;height:19px;background:#404040"></div><div style="position:absolute;left:101.7px;top:492px;width:1px;height:19px;background:#404040"></div><div style="position:absolute;left:71.0px;top:511px;width:1px;height:19px;background:#404040"></div><div style="position:absolute;left:86.4px;top:511px;width:1px;height:19px;background:#404040"></div><div style="position:absolute;left:101.7px;top:511px;width:1px;height:19px;background:#404040"></div><div style="position:absolute;left:117.1px;top:511px;width:1px;height:19px;background:#404040"></div><div style="position:absolute;left:132.4px;top:511px;width:1px;height:19px;background:#404040"></div><div style="position:absolute;left:147.8px;top:511px;width:1px;height:19px;background:#404040"></div><div style="position:absolute;left:163.2px;top:511px;width:1px;height:19px;background:#404040"></div><div style="position:absolute;left:178.5px;top:511px;width:1px;height:19px;background:#404040"></div><div style="position:absolute;left:193.9px;top:511px;width:1px;height:19px;background:#404040"></div><div style="position:absolute;left:209.2px;top:511px;width:1px;height:19px;background:#404040"></div><div style="position:absolute;left:224.6px;top:511px;width:1px;height:19px;background:#404040"></div><div style="position:absolute;left:240.0px;top:511px;width:1px;height:19px;background:#404040"></div><div style="position:absolute;left:255.3px;top:511px;width:1px;height:19px;background:#404040"></div><div style="position:absolute;left:71.0px;top:530px;width:1px;height:19px;background:#404040"></div><div style="position:absolute;left:86.4px;top:530px;width:1px;height:19px;background:#404040"></div><div style="position:absolute;left:101.7px;top:530px;width:1px;height:19px;background:#404040"></div><div style="position:absolute;left:117.1px;top:530px;width:1px;height:19px;background:#404040"></div><div style="position:absolute;left:132.4px;top:530px;width:1px;height:19px;background:#404040"></div><div style="position:absolute;left:147.8px;top:530px;width:1px;height:19px;background:#404040"></div><div style="position:absolute;left:163.2px;top:530px;width:1px;height:19px;background:#404040"></div><div style="position:absolute;left:178.5px;top:530px;width:1px;height:19px;background:#404040"></div><div style="position:absolute;left:193.9px;top:530px;width:1px;height:19px;background:#404040"></div><div style="position:absolute;left:209.2px;top:530px;width:1px;height:19px;background:#404040"></div><div style="position:absolute;left:224.6px;top:530px;width:1px;height:19px;background:#404040"></div><div style="position:absolute;left:240.0px;top:530px;width:1px;height:19px;background:#404040"></div><div style="position:absolute;left:255.3px;top:530px;width:1px;height:19px;background:#404040"></div><div style="position:absolute;left:270.7px;top:530px;width:1px;height:19px;background:#404040"></div><div style="position:absolute;left:286.0px;top:530px;width:1px;height:19px;background:#404040"></div><div style="position:absolute;left:301.4px;top:530px;width:1px;height:19px;background:#404040"></div><div style="position:absolute;left:316.8px;top:530px;width:1px;height:19px;background:#404040"></div><div style="position:absolute;left:332.1px;top:530px;width:1px;height:19px;background:#404040"></div><div style="position:absolute;left:71.0px;top:549px;width:1px;height:19px;background:#404040"></div><div style="position:absolute;left:86.4px;top:549px;width:1px;height:19px;background:#404040"></div><div style="position:absolute;left:101.7px;top:549px;width:1px;height:19px;background:#404040"></div><div style="position:absolute;left:117.1px;top:549px;width:1px;height:19px;background:#404040"></div><div style="position:absolute;left:132.4px;top:549px;width:1px;height:19px;background:#404040"></div><div style="position:absolute;left:147.8px;top:549px;width:1px;height:19px;background:#404040"></div><div style="position:absolute;left:163.2px;top:549px;width:1px;height:19px;background:#404040"></div><div style="position:absolute;left:178.5px;top:549px;width:1px;height:19px;background:#404040"></div><div style="position:absolute;left:193.9px;top:549px;width:1px;height:19px;background:#404040"></div><div style="position:absolute;left:209.2px;top:549px;width:1px;height:19px;background:#404040"></div><div style="position:absolute;left:224.6px;top:549px;width:1px;height:19px;background:#404040"></div><div style="position:absolute;left:240.0px;top:549px;width:1px;height:19px;background:#404040"></div><div style="position:absolute;left:71.0px;top:568px;width:1px;height:19px;background:#404040"></div><div style="position:absolute;left:86.4px;top:568px;width:1px;height:19px;background:#404040"></div><div style="position:absolute;left:101.7px;top:568px;width:1px;height:19px;background:#404040"></div><div style="position:absolute;left:117.1px;top:568px;width:1px;height:19px;background:#404040"></div><div style="position:absolute;left:132.4px;top:568px;width:1px;height:19px;background:#404040"></div><div style="position:absolute;left:147.8px;top:568px;width:1px;height:19px;background:#404040"></div><div style="position:absolute;left:163.2px;top:568px;width:1px;height:19px;background:#404040"></div><div style="position:absolute;left:178.5px;top:568px;width:1px;height:19px;background:#404040"></div><div style="position:absolute;left:193.9px;top:568px;width:1px;height:19px;background:#404040"></div><div style="position:absolute;left:209.2px;top:568px;width:1px;height:19px;background:#404040"></div><div style="position:absolute;left:224.6px;top:568px;width:1px;height:19px;background:#404040"></div><div style="position:absolute;left:240.0px;top:568px;width:1px;height:19px;background:#404040"></div><div style="position:absolute;left:71.0px;top:587px;width:1px;height:19px;background:#404040"></div><div style="position:absolute;left:86.4px;top:587px;width:1px;height:19px;background:#404040"></div><div style="position:absolute;left:101.7px;top:587px;width:1px;height:19px;background:#404040"></div><div style="position:absolute;left:71.0px;top:606px;width:1px;height:19px;background:#404040"></div><div style="position:absolute;left:86.4px;top:606px;width:1px;height:19px;background:#404040"></div><div style="position:absolute;left:101.7px;top:606px;width:1px;height:19px;background:#404040"></div><div style="position:absolute;left:117.1px;top:606px;width:1px;height:19px;background:#404040"></div><div style="position:absolute;left:132.4px;top:606px;width:1px;height:19px;background:#404040"></div><div style="position:absolute;left:147.8px;top:606px;width:1px;height:19px;background:#404040"></div><div style="position:absolute;left:163.2px;top:606px;width:1px;height:19px;background:#404040"></div><div style="position:absolute;left:178.5px;top:606px;width:1px;height:19px;background:#404040"></div><div style="position:absolute;left:193.9px;top:606px;width:1px;height:19px;background:#404040"></div><div style="position:absolute;left:209.2px;top:606px;width:1px;height:19px;background:#404040"></div><div style="position:absolute;left:224.6px;top:606px;width:1px;height:19px;background:#404040"></div><div style="position:absolute;left:240.0px;top:606px;width:1px;height:19px;background:#404040"></div><div style="position:absolute;left:255.3px;top:606px;width:1px;height:19px;background:#404040"></div><div style="position:absolute;left:71.0px;top:625px;width:1px;height:19px;background:#404040"></div><div style="position:absolute;left:86.4px;top:625px;width:1px;height:19px;background:#404040"></div><div style="position:absolute;left:101.7px;top:625px;width:1px;height:19px;background:#404040"></div><div style="position:absolute;left:117.1px;top:625px;width:1px;height:19px;background:#404040"></div><div style="position:absolute;left:132.4px;top:625px;width:1px;height:19px;background:#404040"></div><div style="position:absolute;left:147.8px;top:625px;width:1px;height:19px;background:#404040"></div><div style="position:absolute;left:163.2px;top:625px;width:1px;height:19px;background:#404040"></div><div style="position:absolute;left:178.5px;top:625px;width:1px;height:19px;background:#404040"></div><div style="position:absolute;left:193.9px;top:625px;width:1px;height:19px;background:#404040"></div><div style="position:absolute;left:209.2px;top:625px;width:1px;height:19px;background:#404040"></div><div style="position:absolute;left:224.6px;top:625px;width:1px;height:19px;background:#404040"></div><div style="position:absolute;left:240.0px;top:625px;width:1px;height:19px;background:#404040"></div><div style="position:absolute;left:255.3px;top:625px;width:1px;height:19px;background:#404040"></div><div style="position:absolute;left:270.7px;top:625px;width:1px;height:19px;background:#404040"></div><div style="position:absolute;left:286.0px;top:625px;width:1px;height:19px;background:#404040"></div><div style="position:absolute;left:301.4px;top:625px;width:1px;height:19px;background:#404040"></div><div style="position:absolute;left:316.8px;top:625px;width:1px;height:19px;background:#404040"></div><div style="position:absolute;left:332.1px;top:625px;width:1px;height:19px;background:#404040"></div><div style="position:absolute;left:71.0px;top:644px;width:1px;height:19px;background:#404040"></div><div style="position:absolute;left:86.4px;top:644px;width:1px;height:19px;background:#404040"></div><div style="position:absolute;left:101.7px;top:644px;width:1px;height:19px;background:#404040"></div><div style="position:absolute;left:117.1px;top:644px;width:1px;height:19px;background:#404040"></div><div style="position:absolute;left:132.4px;top:644px;width:1px;height:19px;background:#404040"></div><div style="position:absolute;left:147.8px;top:644px;width:1px;height:19px;background:#404040"></div><div style="position:absolute;left:163.2px;top:644px;width:1px;height:19px;background:#404040"></div><div style="position:absolute;left:178.5px;top:644px;width:1px;height:19px;background:#404040"></div><div style="position:absolute;left:193.9px;top:644px;width:1px;height:19px;background:#404040"></div><div style="position:absolute;left:209.2px;top:644px;width:1px;height:19px;background:#404040"></div><div style="position:absolute;left:224.6px;top:644px;width:1px;height:19px;background:#404040"></div><div style="position:absolute;left:240.0px;top:644px;width:1px;height:19px;background:#404040"></div><div style="position:absolute;left:71.0px;top:663px;width:1px;height:19px;background:#404040"></div><div style="position:absolute;left:86.4px;top:663px;width:1px;height:19px;background:#404040"></div><div style="position:absolute;left:101.7px;top:663px;width:1px;height:19px;background:#404040"></div><div style="position:absolute;left:117.1px;top:663px;width:1px;height:19px;background:#404040"></div><div style="position:absolute;left:132.4px;top:663px;width:1px;height:19px;background:#404040"></div><div style="position:absolute;left:147.8px;top:663px;width:1px;height:19px;background:#404040"></div><div style="position:absolute;left:163.2px;top:663px;width:1px;height:19px;background:#404040"></div><div style="position:absolute;left:178.5px;top:663px;width:1px;height:19px;background:#404040"></div><div style="position:absolute;left:193.9px;top:663px;width:1px;height:19px;background:#404040"></div><div style="position:absolute;left:209.2px;top:663px;width:1px;height:19px;background:#404040"></div><div style="position:absolute;left:224.6px;top:663px;width:1px;height:19px;background:#404040"></div><div style="position:absolute;left:240.0px;top:663px;width:1px;height:19px;background:#404040"></div><div style="position:absolute;left:71.0px;top:682px;width:1px;height:19px;background:#404040"></div><div style="position:absolute;left:86.4px;top:682px;width:1px;height:19px;background:#404040"></div><div style="position:absolute;left:71.0px;top:701px;width:1px;height:19px;background:#404040"></div><div style="position:absolute;left:86.4px;top:701px;width:1px;height:19px;background:#404040"></div><div style="position:absolute;left:71.0px;top:720px;width:1px;height:19px;background:#404040"></div><div style="position:absolute;left:86.4px;top:720px;width:1px;height:19px;background:#404040"></div><div style="position:absolute;left:71.0px;top:739px;width:1px;height:19px;background:#404040"></div><div style="position:absolute;left:71.0px;top:815px;width:1px;height:19px;background:#404040"></div><div style="position:absolute;left:71.0px;top:834px;width:1px;height:19px;background:#404040"></div><div style="position:absolute;left:86.4px;top:834px;width:1px;height:19px;background:#404040"></div><div style="position:absolute;left:71.0px;top:853px;width:1px;height:19px;background:#404040"></div><div style="position:absolute;left:86.4px;top:853px;width:1px;height:19px;background:#404040"></div><div style="position:absolute;left:101.7px;top:853px;width:1px;height:19px;background:#404040"></div><div style="position:absolute;left:117.1px;top:853px;width:1px;height:19px;background:#404040"></div><div style="position:absolute;left:132.4px;top:853px;width:1px;height:19px;background:#404040"></div><div style="position:absolute;left:147.8px;top:853px;width:1px;height:19px;background:#404040"></div><div style="position:absolute;left:163.2px;top:853px;width:1px;height:19px;background:#404040"></div><div style="position:absolute;left:178.5px;top:853px;width:1px;height:19px;background:#404040"></div><div style="position:absolute;left:71.0px;top:872px;width:1px;height:19px;background:#404040"></div><div style="position:absolute;left:86.4px;top:872px;width:1px;height:19px;background:#404040"></div>
<div style="position:absolute;left:7px;top:358px;width:636px;height:543px;overflow:hidden">
<div style="position:absolute;left:-7px;top:-358px;width:1494px;height:966px">
<div class="ln" style="top:359px">1</div><div class="cl" style="top:359px">getComponent = () =&gt; {</div><div class="ln" style="top:378px">2</div><div class="cl" style="top:378px">  <span class="k">const</span> events = getEvents();</div><div class="ln" style="top:397px">3</div><div class="cl" style="top:397px">  <span class="k">const</span> players = getPlayers();</div><div class="ln" style="top:416px">4</div><div class="cl" style="top:416px"></div><div class="ln" style="top:435px">5</div><div class="cl" style="top:435px">  <span class="k">const</span> playersAndHits = players</div><div class="ln" style="top:454px">6</div><div class="cl" style="top:454px">    .map(player =&gt; ({</div><div class="ln" style="top:473px">7</div><div class="cl" style="top:473px">      name: player.name,</div><div class="ln" style="top:492px">8</div><div class="cl" style="top:492px">      spikedHits: events.filter(</div><div class="ln" style="top:511px">9</div><div class="cl" style="top:511px">                          event =&gt; event.ability.name === <span class="s">&#x27;Spiked&#x27;</span> &amp;&amp;</div><div class="ln" style="top:530px">10</div><div class="cl" style="top:530px">                                   event.target.id === player.id</div><div class="ln" style="top:549px">11</div><div class="cl" style="top:549px">                        )</div><div class="ln" style="top:568px">12</div><div class="cl" style="top:568px">                        .length,</div><div class="ln" style="top:587px">13</div><div class="cl" style="top:587px">      spikedBallHits: events.filter(</div><div class="ln" style="top:606px">14</div><div class="cl" style="top:606px">                          event =&gt; event.ability.name === <span class="s">&#x27;Spiked Ball&#x27;</span> &amp;&amp;</div><div class="ln" style="top:625px">15</div><div class="cl" style="top:625px">                                   event.target.id === player.id</div><div class="ln" style="top:644px">16</div><div class="cl" style="top:644px">                        )</div><div class="ln" style="top:663px">17</div><div class="cl" style="top:663px">                        .length</div><div class="ln" style="top:682px">18</div><div class="cl" style="top:682px">    }))</div><div class="ln" style="top:701px">19</div><div class="cl" style="top:701px">    .sort((x, y) =&gt; (y.spikedHits + y.spikedBallHits) - (x.spikedHits + x.spikedBallHits));</div><div class="ln" style="top:720px">20</div><div class="cl" style="top:720px"></div><div class="ln" style="top:739px">21</div><div class="cl" style="top:739px">  <span class="k">return</span> buildBarChart(playersAndHits);</div><div class="ln" style="top:758px">22</div><div class="cl" style="top:758px">}</div><div class="ln" style="top:777px">23</div><div class="cl" style="top:777px"></div><div class="ln" style="top:796px">24</div><div class="cl" style="top:796px"><span class="k">function</span> getEvents() {</div><div class="ln" style="top:815px">25</div><div class="cl" style="top:815px">  <span class="k">return</span> report.fights</div><div class="ln" style="top:834px">26</div><div class="cl" style="top:834px">    .map(x =&gt; x.eventsByCategoryAndDisposition(<span class="s">&#x27;damage&#x27;</span>, <span class="s">&#x27;enemy&#x27;</span>)</div><div class="ln" style="top:853px">27</div><div class="cl" style="top:853px">               .filter(y =&gt; [<span class="s">&#x27;Spiked&#x27;</span>, <span class="s">&#x27;Spiked Ball&#x27;</span>].includes(y.ability.name)))</div><div class="ln" style="top:872px">28</div><div class="cl" style="top:872px">    .reduce((x, y) =&gt; x.concat(y), []);</div><div class="ln" style="top:891px">29</div><div class="cl" style="top:891px">}</div>
</div></div>
<div style="position:absolute;left:645px;top:358px;width:82px;height:543px;overflow:hidden"><div style="position:absolute;left:-645px;top:-358px;width:1494px;height:966px"><div style="position:absolute;left:652px;top:358.5px;width:12px;height:1px;background:#c8c8c8;opacity:0.6"></div><div style="position:absolute;left:665px;top:358.5px;width:1px;height:1px;background:#c8c8c8;opacity:0.35"></div><div style="position:absolute;left:667px;top:358.5px;width:2px;height:1px;background:#c8c8c8;opacity:0.35"></div><div style="position:absolute;left:670px;top:358.5px;width:2px;height:1px;background:#c8c8c8;opacity:0.35"></div><div style="position:absolute;left:673px;top:358.5px;width:1px;height:1px;background:#c8c8c8;opacity:0.35"></div><div style="position:absolute;left:654px;top:360.5px;width:5px;height:1px;background:#569cd6;opacity:0.6"></div><div style="position:absolute;left:660px;top:360.5px;width:6px;height:1px;background:#c8c8c8;opacity:0.6"></div><div style="position:absolute;left:667px;top:360.5px;width:1px;height:1px;background:#c8c8c8;opacity:0.35"></div><div style="position:absolute;left:669px;top:360.5px;width:9px;height:1px;background:#c8c8c8;opacity:0.6"></div><div style="position:absolute;left:678px;top:360.5px;width:3px;height:1px;background:#c8c8c8;opacity:0.35"></div><div style="position:absolute;left:654px;top:362.5px;width:5px;height:1px;background:#569cd6;opacity:0.6"></div><div style="position:absolute;left:660px;top:362.5px;width:7px;height:1px;background:#c8c8c8;opacity:0.6"></div><div style="position:absolute;left:668px;top:362.5px;width:1px;height:1px;background:#c8c8c8;opacity:0.35"></div><div style="position:absolute;left:670px;top:362.5px;width:10px;height:1px;background:#c8c8c8;opacity:0.6"></div><div style="position:absolute;left:680px;top:362.5px;width:3px;height:1px;background:#c8c8c8;opacity:0.35"></div><div style="position:absolute;left:654px;top:366.5px;width:5px;height:1px;background:#569cd6;opacity:0.6"></div><div style="position:absolute;left:660px;top:366.5px;width:14px;height:1px;background:#c8c8c8;opacity:0.6"></div><div style="position:absolute;left:675px;top:366.5px;width:1px;height:1px;background:#c8c8c8;opacity:0.35"></div><div style="position:absolute;left:677px;top:366.5px;width:7px;height:1px;background:#c8c8c8;opacity:0.6"></div><div style="position:absolute;left:656px;top:368.5px;width:1px;height:1px;background:#c8c8c8;opacity:0.35"></div><div style="position:absolute;left:657px;top:368.5px;width:3px;height:1px;background:#c8c8c8;opacity:0.6"></div><div style="position:absolute;left:660px;top:368.5px;width:1px;height:1px;background:#c8c8c8;opacity:0.35"></div><div style="position:absolute;left:661px;top:368.5px;width:6px;height:1px;background:#c8c8c8;opacity:0.6"></div><div style="position:absolute;left:668px;top:368.5px;width:2px;height:1px;background:#c8c8c8;opacity:0.35"></div><div style="position:absolute;left:671px;top:368.5px;width:2px;height:1px;background:#c8c8c8;opacity:0.35"></div><div style="position:absolute;left:658px;top:370.5px;width:4px;height:1px;background:#c8c8c8;opacity:0.6"></div><div style="position:absolute;left:662px;top:370.5px;width:1px;height:1px;background:#c8c8c8;opacity:0.35"></div><div style="position:absolute;left:664px;top:370.5px;width:6px;height:1px;background:#c8c8c8;opacity:0.6"></div><div style="position:absolute;left:670px;top:370.5px;width:1px;height:1px;background:#c8c8c8;opacity:0.35"></div><div style="position:absolute;left:671px;top:370.5px;width:4px;height:1px;background:#c8c8c8;opacity:0.6"></div><div style="position:absolute;left:675px;top:370.5px;width:1px;height:1px;background:#c8c8c8;opacity:0.35"></div><div style="position:absolute;left:658px;top:372.5px;width:10px;height:1px;background:#c8c8c8;opacity:0.6"></div><div style="position:absolute;left:668px;top:372.5px;width:1px;height:1px;background:#c8c8c8;opacity:0.35"></div><div style="position:absolute;left:670px;top:372.5px;width:6px;height:1px;background:#c8c8c8;opacity:0.6"></div><div style="position:absolute;left:676px;top:372.5px;width:1px;height:1px;background:#c8c8c8;opacity:0.35"></div><div style="position:absolute;left:677px;top:372.5px;width:6px;height:1px;background:#c8c8c8;opacity:0.6"></div><div style="position:absolute;left:683px;top:372.5px;width:1px;height:1px;background:#c8c8c8;opacity:0.35"></div><div style="position:absolute;left:678px;top:374.5px;width:5px;height:1px;background:#c8c8c8;opacity:0.6"></div><div style="position:absolute;left:684px;top:374.5px;width:2px;height:1px;background:#c8c8c8;opacity:0.35"></div><div style="position:absolute;left:687px;top:374.5px;width:5px;height:1px;background:#c8c8c8;opacity:0.6"></div><div style="position:absolute;left:692px;top:374.5px;width:1px;height:1px;background:#c8c8c8;opacity:0.35"></div><div style="position:absolute;left:693px;top:374.5px;width:7px;height:1px;background:#c8c8c8;opacity:0.6"></div><div style="position:absolute;left:700px;top:374.5px;width:1px;height:1px;background:#c8c8c8;opacity:0.35"></div><div style="position:absolute;left:701px;top:374.5px;width:4px;height:1px;background:#c8c8c8;opacity:0.6"></div><div style="position:absolute;left:706px;top:374.5px;width:3px;height:1px;background:#c8c8c8;opacity:0.35"></div><div style="position:absolute;left:710px;top:374.5px;width:8px;height:1px;background:#ce9178;opacity:0.6"></div><div style="position:absolute;left:719px;top:374.5px;width:2px;height:1px;background:#c8c8c8;opacity:0.35"></div><div style="position:absolute;left:687px;top:376.5px;width:5px;height:1px;background:#c8c8c8;opacity:0.6"></div><div style="position:absolute;left:692px;top:376.5px;width:1px;height:1px;background:#c8c8c8;opacity:0.35"></div><div style="position:absolute;left:693px;top:376.5px;width:6px;height:1px;background:#c8c8c8;opacity:0.6"></div><div style="position:absolute;left:699px;top:376.5px;width:1px;height:1px;background:#c8c8c8;opacity:0.35"></div><div style="position:absolute;left:700px;top:376.5px;width:2px;height:1px;background:#c8c8c8;opacity:0.6"></div><div style="position:absolute;left:703px;top:376.5px;width:3px;height:1px;background:#c8c8c8;opacity:0.35"></div><div style="position:absolute;left:707px;top:376.5px;width:6px;height:1px;background:#c8c8c8;opacity:0.6"></div><div style="position:absolute;left:713px;top:376.5px;width:1px;height:1px;background:#c8c8c8;opacity:0.35"></div><div style="position:absolute;left:714px;top:376.5px;width:2px;height:1px;background:#c8c8c8;opacity:0.6"></div><div style="position:absolute;left:676px;top:378.5px;width:1px;height:1px;background:#c8c8c8;opacity:0.35"></div><div style="position:absolute;left:676px;top:380.5px;width:1px;height:1px;background:#c8c8c8;opacity:0.35"></div><div style="position:absolute;left:677px;top:380.5px;width:6px;height:1px;background:#c8c8c8;opacity:0.6"></div><div style="position:absolute;left:683px;top:380.5px;width:1px;height:1px;background:#c8c8c8;opacity:0.35"></div><div style="position:absolute;left:658px;top:382.5px;width:14px;height:1px;background:#c8c8c8;opacity:0.6"></div><div style="position:absolute;left:672px;top:382.5px;width:1px;height:1px;background:#c8c8c8;opacity:0.35"></div><div style="position:absolute;left:674px;top:382.5px;width:6px;height:1px;background:#c8c8c8;opacity:0.6"></div><div style="position:absolute;left:680px;top:382.5px;width:1px;height:1px;background:#c8c8c8;opacity:0.35"></div><div style="position:absolute;left:681px;top:382.5px;width:6px;height:1px;background:#c8c8c8;opacity:0.6"></div><div style="position:absolute;left:687px;top:382.5px;width:1px;height:1px;background:#c8c8c8;opacity:0.35"></div><div style="position:absolute;left:678px;top:384.5px;width:5px;height:1px;background:#c8c8c8;opacity:0.6"></div><div style="position:absolute;left:684px;top:384.5px;width:2px;height:1px;background:#c8c8c8;opacity:0.35"></div><div style="position:absolute;left:687px;top:384.5px;width:5px;height:1px;background:#c8c8c8;opacity:0.6"></div><div style="position:absolute;left:692px;top:384.5px;width:1px;height:1px;background:#c8c8c8;opacity:0.35"></div><div style="position:absolute;left:693px;top:384.5px;width:7px;height:1px;background:#c8c8c8;opacity:0.6"></div><div style="position:absolute;left:700px;top:384.5px;width:1px;height:1px;background:#c8c8c8;opacity:0.35"></div><div style="position:absolute;left:701px;top:384.5px;width:4px;height:1px;background:#c8c8c8;opacity:0.6"></div><div style="position:absolute;left:706px;top:384.5px;width:3px;height:1px;background:#c8c8c8;opacity:0.35"></div><div style="position:absolute;left:710px;top:384.5px;width:13px;height:1px;background:#ce9178;opacity:0.6"></div><div style="position:absolute;left:724px;top:384.5px;width:2px;height:1px;background:#c8c8c8;opacity:0.35"></div><div style="position:absolute;left:687px;top:386.5px;width:5px;height:1px;background:#c8c8c8;opacity:0.6"></div><div style="position:absolute;left:692px;top:386.5px;width:1px;height:1px;background:#c8c8c8;opacity:0.35"></div><div style="position:absolute;left:693px;top:386.5px;width:6px;height:1px;background:#c8c8c8;opacity:0.6"></div><div style="position:absolute;left:699px;top:386.5px;width:1px;height:1px;background:#c8c8c8;opacity:0.35"></div><div style="position:absolute;left:700px;top:386.5px;width:2px;height:1px;background:#c8c8c8;opacity:0.6"></div><div style="position:absolute;left:703px;top:386.5px;width:3px;height:1px;background:#c8c8c8;opacity:0.35"></div><div style="position:absolute;left:707px;top:386.5px;width:6px;height:1px;background:#c8c8c8;opacity:0.6"></div><div style="position:absolute;left:713px;top:386.5px;width:1px;height:1px;background:#c8c8c8;opacity:0.35"></div><div style="position:absolute;left:714px;top:386.5px;width:2px;height:1px;background:#c8c8c8;opacity:0.6"></div><div style="position:absolute;left:676px;top:388.5px;width:1px;height:1px;background:#c8c8c8;opacity:0.35"></div><div style="position:absolute;left:676px;top:390.5px;width:1px;height:1px;background:#c8c8c8;opacity:0.35"></div><div style="position:absolute;left:677px;top:390.5px;width:6px;height:1px;background:#c8c8c8;opacity:0.6"></div><div style="position:absolute;left:656px;top:392.5px;width:3px;height:1px;background:#c8c8c8;opacity:0.35"></div><div style="position:absolute;left:656px;top:394.5px;width:1px;height:1px;background:#c8c8c8;opacity:0.35"></div><div style="position:absolute;left:657px;top:394.5px;width:4px;height:1px;background:#c8c8c8;opacity:0.6"></div><div style="position:absolute;left:661px;top:394.5px;width:2px;height:1px;background:#c8c8c8;opacity:0.35"></div><div style="position:absolute;left:663px;top:394.5px;width:1px;height:1px;background:#c8c8c8;opacity:0.6"></div><div style="position:absolute;left:664px;top:394.5px;width:1px;height:1px;background:#c8c8c8;opacity:0.35"></div><div style="position:absolute;left:666px;top:394.5px;width:1px;height:1px;background:#c8c8c8;opacity:0.6"></div><div style="position:absolute;left:667px;top:394.5px;width:1px;height:1px;background:#c8c8c8;opacity:0.35"></div><div style="position:absolute;left:669px;top:394.5px;width:2px;height:1px;background:#c8c8c8;opacity:0.35"></div><div style="position:absolute;left:672px;top:394.5px;width:1px;height:1px;background:#c8c8c8;opacity:0.35"></div><div style="position:absolute;left:673px;top:394.5px;width:1px;height:1px;background:#c8c8c8;opacity:0.6"></div><div style="position:absolute;left:674px;top:394.5px;width:1px;height:1px;background:#c8c8c8;opacity:0.35"></div><div style="position:absolute;left:675px;top:394.5px;width:10px;height:1px;background:#c8c8c8;opacity:0.6"></div><div style="position:absolute;left:686px;top:394.5px;width:1px;height:1px;background:#c8c8c8;opacity:0.35"></div><div style="position:absolute;left:688px;top:394.5px;width:1px;height:1px;background:#c8c8c8;opacity:0.6"></div><div style="position:absolute;left:689px;top:394.5px;width:1px;height:1px;background:#c8c8c8;opacity:0.35"></div><div style="position:absolute;left:690px;top:394.5px;width:14px;height:1px;background:#c8c8c8;opacity:0.6"></div><div style="position:absolute;left:704px;top:394.5px;width:1px;height:1px;background:#c8c8c8;opacity:0.35"></div><div style="position:absolute;left:706px;top:394.5px;width:1px;height:1px;background:#c8c8c8;opacity:0.35"></div><div style="position:absolute;left:708px;top:394.5px;width:1px;height:1px;background:#c8c8c8;opacity:0.35"></div><div style="position:absolute;left:709px;top:394.5px;width:1px;height:1px;background:#c8c8c8;opacity:0.6"></div><div style="position:absolute;left:710px;top:394.5px;width:1px;height:1px;background:#c8c8c8;opacity:0.35"></div><div style="position:absolute;left:711px;top:394.5px;width:10px;height:1px;background:#c8c8c8;opacity:0.6"></div><div style="position:absolute;left:722px;top:394.5px;width:1px;height:1px;background:#c8c8c8;opacity:0.35"></div><div style="position:absolute;left:724px;top:394.5px;width:1px;height:1px;background:#c8c8c8;opacity:0.6"></div><div style="position:absolute;left:725px;top:394.5px;width:1px;height:1px;background:#c8c8c8;opacity:0.35"></div><div style="position:absolute;left:726px;top:394.5px;width:1px;height:1px;background:#c8c8c8;opacity:0.6"></div><div style="position:absolute;left:654px;top:398.5px;width:6px;height:1px;background:#569cd6;opacity:0.6"></div><div style="position:absolute;left:661px;top:398.5px;width:13px;height:1px;background:#c8c8c8;opacity:0.6"></div><div style="position:absolute;left:674px;top:398.5px;width:1px;height:1px;background:#c8c8c8;opacity:0.35"></div><div style="position:absolute;left:675px;top:398.5px;width:14px;height:1px;background:#c8c8c8;opacity:0.6"></div><div style="position:absolute;left:689px;top:398.5px;width:2px;height:1px;background:#c8c8c8;opacity:0.35"></div><div style="position:absolute;left:652px;top:400.5px;width:1px;height:1px;background:#c8c8c8;opacity:0.35"></div><div style="position:absolute;left:652px;top:404.5px;width:8px;height:1px;background:#569cd6;opacity:0.6"></div><div style="position:absolute;left:661px;top:404.5px;width:9px;height:1px;background:#c8c8c8;opacity:0.6"></div><div style="position:absolute;left:670px;top:404.5px;width:2px;height:1px;background:#c8c8c8;opacity:0.35"></div><div style="position:absolute;left:673px;top:404.5px;width:1px;height:1px;background:#c8c8c8;opacity:0.35"></div><div style="position:absolute;left:654px;top:406.5px;width:6px;height:1px;background:#569cd6;opacity:0.6"></div><div style="position:absolute;left:661px;top:406.5px;width:6px;height:1px;background:#c8c8c8;opacity:0.6"></div><div style="position:absolute;left:667px;top:406.5px;width:1px;height:1px;background:#c8c8c8;opacity:0.35"></div><div style="position:absolute;left:668px;top:406.5px;width:6px;height:1px;background:#c8c8c8;opacity:0.6"></div><div style="position:absolute;left:656px;top:408.5px;width:1px;height:1px;background:#c8c8c8;opacity:0.35"></div><div style="position:absolute;left:657px;top:408.5px;width:3px;height:1px;background:#c8c8c8;opacity:0.6"></div><div style="position:absolute;left:660px;top:408.5px;width:1px;height:1px;background:#c8c8c8;opacity:0.35"></div><div style="position:absolute;left:661px;top:408.5px;width:1px;height:1px;background:#c8c8c8;opacity:0.6"></div><div style="position:absolute;left:663px;top:408.5px;width:2px;height:1px;background:#c8c8c8;opacity:0.35"></div><div style="position:absolute;left:666px;top:408.5px;width:1px;height:1px;background:#c8c8c8;opacity:0.6"></div><div style="position:absolute;left:667px;top:408.5px;width:1px;height:1px;background:#c8c8c8;opacity:0.35"></div><div style="position:absolute;left:668px;top:408.5px;width:30px;height:1px;background:#c8c8c8;opacity:0.6"></div><div style="position:absolute;left:698px;top:408.5px;width:1px;height:1px;background:#c8c8c8;opacity:0.35"></div><div style="position:absolute;left:699px;top:408.5px;width:8px;height:1px;background:#ce9178;opacity:0.6"></div><div style="position:absolute;left:707px;top:408.5px;width:1px;height:1px;background:#c8c8c8;opacity:0.35"></div><div style="position:absolute;left:709px;top:408.5px;width:7px;height:1px;background:#ce9178;opacity:0.6"></div><div style="position:absolute;left:716px;top:408.5px;width:1px;height:1px;background:#c8c8c8;opacity:0.35"></div><div style="position:absolute;left:667px;top:410.5px;width:1px;height:1px;background:#c8c8c8;opacity:0.35"></div><div style="position:absolute;left:668px;top:410.5px;width:6px;height:1px;background:#c8c8c8;opacity:0.6"></div><div style="position:absolute;left:674px;top:410.5px;width:1px;height:1px;background:#c8c8c8;opacity:0.35"></div><div style="position:absolute;left:675px;top:410.5px;width:1px;height:1px;background:#c8c8c8;opacity:0.6"></div><div style="position:absolute;left:677px;top:410.5px;width:2px;height:1px;background:#c8c8c8;opacity:0.35"></div><div style="position:absolute;left:680px;top:410.5px;width:1px;height:1px;background:#c8c8c8;opacity:0.35"></div><div style="position:absolute;left:681px;top:410.5px;width:8px;height:1px;background:#ce9178;opacity:0.6"></div><div style="position:absolute;left:689px;top:410.5px;width:1px;height:1px;background:#c8c8c8;opacity:0.35"></div><div style="position:absolute;left:691px;top:410.5px;width:13px;height:1px;background:#ce9178;opacity:0.6"></div><div style="position:absolute;left:704px;top:410.5px;width:2px;height:1px;background:#c8c8c8;opacity:0.35"></div><div style="position:absolute;left:706px;top:410.5px;width:8px;height:1px;background:#c8c8c8;opacity:0.6"></div><div style="position:absolute;left:714px;top:410.5px;width:1px;height:1px;background:#c8c8c8;opacity:0.35"></div><div style="position:absolute;left:715px;top:410.5px;width:1px;height:1px;background:#c8c8c8;opacity:0.6"></div><div style="position:absolute;left:716px;top:410.5px;width:1px;height:1px;background:#c8c8c8;opacity:0.35"></div><div style="position:absolute;left:717px;top:410.5px;width:7px;height:1px;background:#c8c8c8;opacity:0.6"></div><div style="position:absolute;left:724px;top:410.5px;width:1px;height:1px;background:#c8c8c8;opacity:0.35"></div><div style="position:absolute;left:725px;top:410.5px;width:2px;height:1px;background:#c8c8c8;opacity:0.6"></div><div style="position:absolute;left:656px;top:412.5px;width:1px;height:1px;background:#c8c8c8;opacity:0.35"></div><div style="position:absolute;left:657px;top:412.5px;width:6px;height:1px;background:#c8c8c8;opacity:0.6"></div><div style="position:absolute;left:663px;top:412.5px;width:2px;height:1px;background:#c8c8c8;opacity:0.35"></div><div style="position:absolute;left:665px;top:412.5px;width:1px;height:1px;background:#c8c8c8;opacity:0.6"></div><div style="position:absolute;left:666px;top:412.5px;width:1px;height:1px;background:#c8c8c8;opacity:0.35"></div><div style="position:absolute;left:668px;top:412.5px;width:1px;height:1px;background:#c8c8c8;opacity:0.6"></div><div style="position:absolute;left:669px;top:412.5px;width:1px;height:1px;background:#c8c8c8;opacity:0.35"></div><div style="position:absolute;left:671px;top:412.5px;width:2px;height:1px;background:#c8c8c8;opacity:0.35"></div><div style="position:absolute;left:674px;top:412.5px;width:1px;height:1px;background:#c8c8c8;opacity:0.6"></div><div style="position:absolute;left:675px;top:412.5px;width:1px;height:1px;background:#c8c8c8;opacity:0.35"></div><div style="position:absolute;left:676px;top:412.5px;width:6px;height:1px;background:#c8c8c8;opacity:0.6"></div><div style="position:absolute;left:682px;top:412.5px;width:1px;height:1px;background:#c8c8c8;opacity:0.35"></div><div style="position:absolute;left:683px;top:412.5px;width:1px;height:1px;background:#c8c8c8;opacity:0.6"></div><div style="position:absolute;left:684px;top:412.5px;width:2px;height:1px;background:#c8c8c8;opacity:0.35"></div><div style="position:absolute;left:687px;top:412.5px;width:4px;height:1px;background:#c8c8c8;opacity:0.35"></div><div style="position:absolute;left:652px;top:414.5px;width:1px;height:1px;background:#c8c8c8;opacity:0.35"></div><div style="position:absolute;left:652px;top:418.5px;width:8px;height:1px;background:#569cd6;opacity:0.6"></div><div style="position:absolute;left:661px;top:418.5px;width:10px;height:1px;background:#c8c8c8;opacity:0.6"></div><div style="position:absolute;left:671px;top:418.5px;width:2px;height:1px;background:#c8c8c8;opacity:0.35"></div><div style="position:absolute;left:674px;top:418.5px;width:1px;height:1px;background:#c8c8c8;opacity:0.35"></div><div style="position:absolute;left:654px;top:420.5px;width:6px;height:1px;background:#569cd6;opacity:0.6"></div><div style="position:absolute;left:661px;top:420.5px;width:6px;height:1px;background:#c8c8c8;opacity:0.6"></div><div style="position:absolute;left:667px;top:420.5px;width:1px;height:1px;background:#c8c8c8;opacity:0.35"></div><div style="position:absolute;left:668px;top:420.5px;width:6px;height:1px;background:#c8c8c8;opacity:0.6"></div><div style="position:absolute;left:656px;top:422.5px;width:1px;height:1px;background:#c8c8c8;opacity:0.35"></div><div style="position:absolute;left:657px;top:422.5px;width:3px;height:1px;background:#c8c8c8;opacity:0.6"></div><div style="position:absolute;left:660px;top:422.5px;width:1px;height:1px;background:#c8c8c8;opacity:0.35"></div><div style="position:absolute;left:661px;top:422.5px;width:1px;height:1px;background:#c8c8c8;opacity:0.6"></div><div style="position:absolute;left:663px;top:422.5px;width:2px;height:1px;background:#c8c8c8;opacity:0.35"></div><div style="position:absolute;left:666px;top:422.5px;width:1px;height:1px;background:#c8c8c8;opacity:0.6"></div><div style="position:absolute;left:667px;top:422.5px;width:1px;height:1px;background:#c8c8c8;opacity:0.35"></div><div style="position:absolute;left:668px;top:422.5px;width:20px;height:1px;background:#c8c8c8;opacity:0.6"></div><div style="position:absolute;left:667px;top:424.5px;width:1px;height:1px;background:#c8c8c8;opacity:0.35"></div><div style="position:absolute;left:668px;top:424.5px;width:6px;height:1px;background:#c8c8c8;opacity:0.6"></div><div style="position:absolute;left:674px;top:424.5px;width:1px;height:1px;background:#c8c8c8;opacity:0.35"></div><div style="position:absolute;left:675px;top:424.5px;width:1px;height:1px;background:#c8c8c8;opacity:0.6"></div><div style="position:absolute;left:677px;top:424.5px;width:2px;height:1px;background:#c8c8c8;opacity:0.35"></div><div style="position:absolute;left:680px;top:424.5px;width:1px;height:1px;background:#c8c8c8;opacity:0.6"></div><div style="position:absolute;left:681px;top:424.5px;width:1px;height:1px;background:#c8c8c8;opacity:0.35"></div><div style="position:absolute;left:682px;top:424.5px;width:4px;height:1px;background:#c8c8c8;opacity:0.6"></div><div style="position:absolute;left:687px;top:424.5px;width:3px;height:1px;background:#c8c8c8;opacity:0.35"></div><div style="position:absolute;left:691px;top:424.5px;width:8px;height:1px;background:#ce9178;opacity:0.6"></div><div style="position:absolute;left:699px;top:424.5px;width:2px;height:1px;background:#c8c8c8;opacity:0.35"></div><div style="position:absolute;left:656px;top:426.5px;width:1px;height:1px;background:#c8c8c8;opacity:0.35"></div><div style="position:absolute;left:657px;top:426.5px;width:6px;height:1px;background:#c8c8c8;opacity:0.6"></div><div style="position:absolute;left:663px;top:426.5px;width:2px;height:1px;background:#c8c8c8;opacity:0.35"></div><div style="position:absolute;left:665px;top:426.5px;width:1px;height:1px;background:#c8c8c8;opacity:0.6"></div><div style="position:absolute;left:666px;top:426.5px;width:1px;height:1px;background:#c8c8c8;opacity:0.35"></div><div style="position:absolute;left:668px;top:426.5px;width:1px;height:1px;background:#c8c8c8;opacity:0.6"></div><div style="position:absolute;left:669px;top:426.5px;width:1px;height:1px;background:#c8c8c8;opacity:0.35"></div><div style="position:absolute;left:671px;top:426.5px;width:2px;height:1px;background:#c8c8c8;opacity:0.35"></div><div style="position:absolute;left:674px;top:426.5px;width:1px;height:1px;background:#c8c8c8;opacity:0.6"></div><div style="position:absolute;left:675px;top:426.5px;width:1px;height:1px;background:#c8c8c8;opacity:0.35"></div><div style="position:absolute;left:676px;top:426.5px;width:6px;height:1px;background:#c8c8c8;opacity:0.6"></div><div style="position:absolute;left:682px;top:426.5px;width:1px;height:1px;background:#c8c8c8;opacity:0.35"></div><div style="position:absolute;left:683px;top:426.5px;width:1px;height:1px;background:#c8c8c8;opacity:0.6"></div><div style="position:absolute;left:684px;top:426.5px;width:2px;height:1px;background:#c8c8c8;opacity:0.35"></div><div style="position:absolute;left:687px;top:426.5px;width:3px;height:1px;background:#c8c8c8;opacity:0.35"></div><div style="position:absolute;left:656px;top:428.5px;width:1px;height:1px;background:#c8c8c8;opacity:0.35"></div><div style="position:absolute;left:657px;top:428.5px;width:6px;height:1px;background:#c8c8c8;opacity:0.6"></div><div style="position:absolute;left:663px;top:428.5px;width:2px;height:1px;background:#c8c8c8;opacity:0.35"></div><div style="position:absolute;left:665px;top:428.5px;width:4px;height:1px;background:#c8c8c8;opacity:0.6"></div><div style="position:absolute;left:669px;top:428.5px;width:1px;height:1px;background:#c8c8c8;opacity:0.35"></div><div style="position:absolute;left:671px;top:428.5px;width:5px;height:1px;background:#c8c8c8;opacity:0.6"></div><div style="position:absolute;left:676px;top:428.5px;width:1px;height:1px;background:#c8c8c8;opacity:0.35"></div><div style="position:absolute;left:678px;top:428.5px;width:5px;height:1px;background:#c8c8c8;opacity:0.6"></div><div style="position:absolute;left:683px;top:428.5px;width:1px;height:1px;background:#c8c8c8;opacity:0.35"></div><div style="position:absolute;left:685px;top:428.5px;width:2px;height:1px;background:#c8c8c8;opacity:0.35"></div><div style="position:absolute;left:688px;top:428.5px;width:5px;height:1px;background:#c8c8c8;opacity:0.6"></div><div style="position:absolute;left:693px;top:428.5px;width:1px;height:1px;background:#c8c8c8;opacity:0.35"></div><div style="position:absolute;left:694px;top:428.5px;width:7px;height:1px;background:#c8c8c8;opacity:0.6"></div><div style="position:absolute;left:701px;top:428.5px;width:1px;height:1px;background:#c8c8c8;opacity:0.35"></div><div style="position:absolute;left:702px;top:428.5px;width:4px;height:1px;background:#c8c8c8;opacity:0.6"></div><div style="position:absolute;left:706px;top:428.5px;width:1px;height:1px;background:#c8c8c8;opacity:0.35"></div><div style="position:absolute;left:708px;top:428.5px;width:3px;height:1px;background:#c8c8c8;opacity:0.35"></div><div style="position:absolute;left:712px;top:428.5px;width:5px;height:1px;background:#c8c8c8;opacity:0.6"></div><div style="position:absolute;left:717px;top:428.5px;width:2px;height:1px;background:#c8c8c8;opacity:0.35"></div><div style="position:absolute;left:652px;top:430.5px;width:1px;height:1px;background:#c8c8c8;opacity:0.35"></div><div style="position:absolute;left:652px;top:434.5px;width:8px;height:1px;background:#569cd6;opacity:0.6"></div><div style="position:absolute;left:661px;top:434.5px;width:13px;height:1px;background:#c8c8c8;opacity:0.6"></div><div style="position:absolute;left:674px;top:434.5px;width:1px;height:1px;background:#c8c8c8;opacity:0.35"></div><div style="position:absolute;left:675px;top:434.5px;width:14px;height:1px;background:#c8c8c8;opacity:0.6"></div><div style="position:absolute;left:689px;top:434.5px;width:1px;height:1px;background:#c8c8c8;opacity:0.35"></div><div style="position:absolute;left:691px;top:434.5px;width:1px;height:1px;background:#c8c8c8;opacity:0.35"></div><div style="position:absolute;left:654px;top:436.5px;width:6px;height:1px;background:#569cd6;opacity:0.6"></div><div style="position:absolute;left:661px;top:436.5px;width:1px;height:1px;background:#c8c8c8;opacity:0.35"></div><div style="position:absolute;left:656px;top:438.5px;width:9px;height:1px;background:#c8c8c8;opacity:0.6"></div><div style="position:absolute;left:665px;top:438.5px;width:1px;height:1px;background:#c8c8c8;opacity:0.35"></div><div style="position:absolute;left:667px;top:438.5px;width:7px;height:1px;background:#ce9178;opacity:0.6"></div><div style="position:absolute;left:674px;top:438.5px;width:1px;height:1px;background:#c8c8c8;opacity:0.35"></div><div style="position:absolute;left:656px;top:440.5px;width:5px;height:1px;background:#c8c8c8;opacity:0.6"></div><div style="position:absolute;left:661px;top:440.5px;width:1px;height:1px;background:#c8c8c8;opacity:0.35"></div><div style="position:absolute;left:663px;top:440.5px;width:1px;height:1px;background:#c8c8c8;opacity:0.35"></div><div style="position:absolute;left:658px;top:442.5px;width:5px;height:1px;background:#c8c8c8;opacity:0.6"></div><div style="position:absolute;left:663px;top:442.5px;width:1px;height:1px;background:#c8c8c8;opacity:0.35"></div><div style="position:absolute;left:665px;top:442.5px;width:1px;height:1px;background:#c8c8c8;opacity:0.35"></div><div style="position:absolute;left:660px;top:444.5px;width:4px;height:1px;background:#c8c8c8;opacity:0.6"></div><div style="position:absolute;left:664px;top:444.5px;width:1px;height:1px;background:#c8c8c8;opacity:0.35"></div><div style="position:absolute;left:666px;top:444.5px;width:5px;height:1px;background:#ce9178;opacity:0.6"></div><div style="position:absolute;left:671px;top:444.5px;width:1px;height:1px;background:#c8c8c8;opacity:0.35"></div><div style="position:absolute;left:660px;top:446.5px;width:6px;height:1px;background:#c8c8c8;opacity:0.6"></div><div style="position:absolute;left:666px;top:446.5px;width:1px;height:1px;background:#c8c8c8;opacity:0.35"></div><div style="position:absolute;left:668px;top:446.5px;width:3px;height:1px;background:#b5cea8;opacity:0.35"></div><div style="position:absolute;left:658px;top:448.5px;width:2px;height:1px;background:#c8c8c8;opacity:0.35"></div><div style="position:absolute;left:658px;top:450.5px;width:5px;height:1px;background:#c8c8c8;opacity:0.6"></div><div style="position:absolute;left:663px;top:450.5px;width:1px;height:1px;background:#c8c8c8;opacity:0.35"></div><div style="position:absolute;left:665px;top:450.5px;width:1px;height:1px;background:#c8c8c8;opacity:0.35"></div><div style="position:absolute;left:660px;top:452.5px;width:4px;height:1px;background:#c8c8c8;opacity:0.6"></div><div style="position:absolute;left:664px;top:452.5px;width:1px;height:1px;background:#c8c8c8;opacity:0.35"></div><div style="position:absolute;left:666px;top:452.5px;width:30px;height:1px;background:#ce9178;opacity:0.6"></div><div style="position:absolute;left:696px;top:452.5px;width:1px;height:1px;background:#c8c8c8;opacity:0.35"></div><div style="position:absolute;left:658px;top:454.5px;width:2px;height:1px;background:#c8c8c8;opacity:0.35"></div><div style="position:absolute;left:658px;top:456.5px;width:5px;height:1px;background:#c8c8c8;opacity:0.6"></div><div style="position:absolute;left:663px;top:456.5px;width:1px;height:1px;background:#c8c8c8;opacity:0.35"></div><div style="position:absolute;left:665px;top:456.5px;width:1px;height:1px;background:#c8c8c8;opacity:0.35"></div><div style="position:absolute;left:660px;top:458.5px;width:10px;height:1px;background:#c8c8c8;opacity:0.6"></div><div style="position:absolute;left:670px;top:458.5px;width:1px;height:1px;background:#c8c8c8;opacity:0.35"></div><div style="position:absolute;left:672px;top:458.5px;width:14px;height:1px;background:#c8c8c8;opacity:0.6"></div><div style="position:absolute;left:686px;top:458.5px;width:1px;height:1px;background:#c8c8c8;opacity:0.35"></div><div style="position:absolute;left:687px;top:458.5px;width:3px;height:1px;background:#c8c8c8;opacity:0.6"></div><div style="position:absolute;left:690px;top:458.5px;width:1px;height:1px;background:#c8c8c8;opacity:0.35"></div><div style="position:absolute;left:691px;top:458.5px;width:1px;height:1px;background:#c8c8c8;opacity:0.6"></div><div style="position:absolute;left:693px;top:458.5px;width:2px;height:1px;background:#c8c8c8;opacity:0.35"></div><div style="position:absolute;left:696px;top:458.5px;width:1px;height:1px;background:#c8c8c8;opacity:0.6"></div><div style="position:absolute;left:697px;top:458.5px;width:1px;height:1px;background:#c8c8c8;opacity:0.35"></div><div style="position:absolute;left:698px;top:458.5px;width:4px;height:1px;background:#c8c8c8;opacity:0.6"></div><div style="position:absolute;left:702px;top:458.5px;width:2px;height:1px;background:#c8c8c8;opacity:0.35"></div><div style="position:absolute;left:660px;top:460.5px;width:5px;height:1px;background:#c8c8c8;opacity:0.6"></div><div style="position:absolute;left:665px;top:460.5px;width:1px;height:1px;background:#c8c8c8;opacity:0.35"></div><div style="position:absolute;left:667px;top:460.5px;width:1px;height:1px;background:#c8c8c8;opacity:0.35"></div><div style="position:absolute;left:662px;top:462.5px;width:4px;height:1px;background:#c8c8c8;opacity:0.6"></div><div style="position:absolute;left:666px;top:462.5px;width:1px;height:1px;background:#c8c8c8;opacity:0.35"></div><div style="position:absolute;left:668px;top:462.5px;width:9px;height:1px;background:#ce9178;opacity:0.6"></div><div style="position:absolute;left:677px;top:462.5px;width:1px;height:1px;background:#c8c8c8;opacity:0.35"></div><div style="position:absolute;left:660px;top:464.5px;width:2px;height:1px;background:#c8c8c8;opacity:0.35"></div><div style="position:absolute;left:658px;top:466.5px;width:2px;height:1px;background:#c8c8c8;opacity:0.35"></div><div style="position:absolute;left:658px;top:468.5px;width:5px;height:1px;background:#c8c8c8;opacity:0.6"></div><div style="position:absolute;left:663px;top:468.5px;width:1px;height:1px;background:#c8c8c8;opacity:0.35"></div><div style="position:absolute;left:665px;top:468.5px;width:1px;height:1px;background:#c8c8c8;opacity:0.35"></div><div style="position:absolute;left:660px;top:470.5px;width:5px;height:1px;background:#c8c8c8;opacity:0.6"></div><div style="position:absolute;left:665px;top:470.5px;width:1px;height:1px;background:#c8c8c8;opacity:0.35"></div><div style="position:absolute;left:667px;top:470.5px;width:6px;height:1px;background:#ce9178;opacity:0.6"></div><div style="position:absolute;left:673px;top:470.5px;width:1px;height:1px;background:#c8c8c8;opacity:0.35"></div><div style="position:absolute;left:658px;top:472.5px;width:2px;height:1px;background:#c8c8c8;opacity:0.35"></div><div style="position:absolute;left:658px;top:474.5px;width:6px;height:1px;background:#c8c8c8;opacity:0.6"></div><div style="position:absolute;left:664px;top:474.5px;width:1px;height:1px;background:#c8c8c8;opacity:0.35"></div><div style="position:absolute;left:666px;top:474.5px;width:1px;height:1px;background:#c8c8c8;opacity:0.35"></div><div style="position:absolute;left:660px;top:476.5px;width:1px;height:1px;background:#c8c8c8;opacity:0.35"></div><div style="position:absolute;left:662px;top:478.5px;width:4px;height:1px;background:#c8c8c8;opacity:0.6"></div><div style="position:absolute;left:666px;top:478.5px;width:1px;height:1px;background:#c8c8c8;opacity:0.35"></div><div style="position:absolute;left:668px;top:478.5px;width:8px;height:1px;background:#ce9178;opacity:0.6"></div><div style="position:absolute;left:676px;top:478.5px;width:1px;height:1px;background:#c8c8c8;opacity:0.35"></div><div style="position:absolute;left:662px;top:480.5px;width:4px;height:1px;background:#c8c8c8;opacity:0.6"></div><div style="position:absolute;left:666px;top:480.5px;width:1px;height:1px;background:#c8c8c8;opacity:0.35"></div><div style="position:absolute;left:668px;top:480.5px;width:14px;height:1px;background:#c8c8c8;opacity:0.6"></div><div style="position:absolute;left:682px;top:480.5px;width:1px;height:1px;background:#c8c8c8;opacity:0.35"></div><div style="position:absolute;left:683px;top:480.5px;width:3px;height:1px;background:#c8c8c8;opacity:0.6"></div><div style="position:absolute;left:686px;top:480.5px;width:1px;height:1px;background:#c8c8c8;opacity:0.35"></div><div style="position:absolute;left:687px;top:480.5px;width:1px;height:1px;background:#c8c8c8;opacity:0.6"></div><div style="position:absolute;left:689px;top:480.5px;width:2px;height:1px;background:#c8c8c8;opacity:0.35"></div><div style="position:absolute;left:692px;top:480.5px;width:1px;height:1px;background:#c8c8c8;opacity:0.6"></div><div style="position:absolute;left:693px;top:480.5px;width:1px;height:1px;background:#c8c8c8;opacity:0.35"></div><div style="position:absolute;left:694px;top:480.5px;width:10px;height:1px;background:#c8c8c8;opacity:0.6"></div><div style="position:absolute;left:704px;top:480.5px;width:2px;height:1px;background:#c8c8c8;opacity:0.35"></div><div style="position:absolute;left:660px;top:482.5px;width:2px;height:1px;background:#c8c8c8;opacity:0.35"></div><div style="position:absolute;left:660px;top:484.5px;width:1px;height:1px;background:#c8c8c8;opacity:0.35"></div><div style="position:absolute;left:662px;top:486.5px;width:4px;height:1px;background:#c8c8c8;opacity:0.6"></div><div style="position:absolute;left:666px;top:486.5px;width:1px;height:1px;background:#c8c8c8;opacity:0.35"></div><div style="position:absolute;left:668px;top:486.5px;width:13px;height:1px;background:#ce9178;opacity:0.6"></div><div style="position:absolute;left:681px;top:486.5px;width:1px;height:1px;background:#c8c8c8;opacity:0.35"></div><div style="position:absolute;left:662px;top:488.5px;width:4px;height:1px;background:#c8c8c8;opacity:0.6"></div><div style="position:absolute;left:666px;top:488.5px;width:1px;height:1px;background:#c8c8c8;opacity:0.35"></div><div style="position:absolute;left:668px;top:488.5px;width:14px;height:1px;background:#c8c8c8;opacity:0.6"></div><div style="position:absolute;left:682px;top:488.5px;width:1px;height:1px;background:#c8c8c8;opacity:0.35"></div><div style="position:absolute;left:683px;top:488.5px;width:3px;height:1px;background:#c8c8c8;opacity:0.6"></div><div style="position:absolute;left:686px;top:488.5px;width:1px;height:1px;background:#c8c8c8;opacity:0.35"></div><div style="position:absolute;left:687px;top:488.5px;width:1px;height:1px;background:#c8c8c8;opacity:0.6"></div><div style="position:absolute;left:689px;top:488.5px;width:2px;height:1px;background:#c8c8c8;opacity:0.35"></div><div style="position:absolute;left:692px;top:488.5px;width:1px;height:1px;background:#c8c8c8;opacity:0.6"></div><div style="position:absolute;left:693px;top:488.5px;width:1px;height:1px;background:#c8c8c8;opacity:0.35"></div><div style="position:absolute;left:694px;top:488.5px;width:14px;height:1px;background:#c8c8c8;opacity:0.6"></div><div style="position:absolute;left:708px;top:488.5px;width:2px;height:1px;background:#c8c8c8;opacity:0.35"></div><div style="position:absolute;left:660px;top:490.5px;width:2px;height:1px;background:#c8c8c8;opacity:0.35"></div><div style="position:absolute;left:658px;top:492.5px;width:2px;height:1px;background:#c8c8c8;opacity:0.35"></div><div style="position:absolute;left:656px;top:494.5px;width:2px;height:1px;background:#c8c8c8;opacity:0.35"></div><div style="position:absolute;left:654px;top:496.5px;width:2px;height:1px;background:#c8c8c8;opacity:0.35"></div><div style="position:absolute;left:652px;top:498.5px;width:1px;height:1px;background:#c8c8c8;opacity:0.35"></div>
<div style="position:absolute;left:652px;top:498px;width:75px;height:2px;background:#264f78"></div>
</div></div>
<div style="position:absolute;left:727px;top:358px;width:1px;height:543px;background:#3c3c3c"></div>
<div style="position:absolute;left:728px;top:566px;width:6px;height:6px;background:#a8a8a8"></div>
<div style="position:absolute;left:728px;top:742px;width:6px;height:6px;background:#a8a8a8"></div>
<div style="position:absolute;left:734px;top:742px;width:7px;height:1px;background:#888"></div>
<div style="position:absolute;left:615px;top:921px;width:126px;height:37px;border-radius:4px;background:linear-gradient(#0b5d88,#063f60)"></div>
<div class="t" style="left:615px;top:928px;width:126px;text-align:center;font-size:18px;color:#e6e6e6;line-height:22px">Run</div>


<div style="position:absolute;left:753px;top:358px;width:731px;height:597px;border:1px solid #333;background:#141414"></div>
<div class="t" style="left:753px;top:372px;width:734px;text-align:center;font-size:16px;color:#fff;letter-spacing:0.5px;line-height:20px">Hit by Spiked or Spiked Ball</div>
<svg width="1494" height="966" style="position:absolute;left:0;top:0"><line x1="869.5" y1="413" x2="869.5" y2="872" stroke="#3a3a3a" stroke-width="1"/><line x1="936.9" y1="413" x2="936.9" y2="872" stroke="#2e2e2e" stroke-width="1"/><line x1="1004.4" y1="413" x2="1004.4" y2="872" stroke="#2e2e2e" stroke-width="1"/><line x1="1071.8" y1="413" x2="1071.8" y2="872" stroke="#2e2e2e" stroke-width="1"/><line x1="1139.3" y1="413" x2="1139.3" y2="872" stroke="#2e2e2e" stroke-width="1"/><line x1="1206.7" y1="413" x2="1206.7" y2="872" stroke="#2e2e2e" stroke-width="1"/><line x1="1274.1" y1="413" x2="1274.1" y2="872" stroke="#2e2e2e" stroke-width="1"/><line x1="1341.6" y1="413" x2="1341.6" y2="872" stroke="#2e2e2e" stroke-width="1"/><line x1="1409.0" y1="413" x2="1409.0" y2="872" stroke="#2e2e2e" stroke-width="1"/><line x1="1476.5" y1="413" x2="1476.5" y2="872" stroke="#2e2e2e" stroke-width="1"/><rect x="870.2" y="418.5" width="369.7" height="6" fill="#a8ecea" stroke="#fff" stroke-width="1"/><rect x="870.2" y="425.5" width="336.0" height="6" fill="#f45b5b" stroke="#fff" stroke-width="1"/><rect x="870.2" y="441.5" width="538.3" height="6" fill="#a8ecea" stroke="#fff" stroke-width="1"/><rect x="870.2" y="448.5" width="133.7" height="6" fill="#f45b5b" stroke="#fff" stroke-width="1"/><rect x="870.2" y="464.5" width="369.7" height="6" fill="#a8ecea" stroke="#fff" stroke-width="1"/><rect x="870.2" y="471.5" width="167.4" height="6" fill="#f45b5b" stroke="#fff" stroke-width="1"/><rect x="870.2" y="487.5" width="302.3" height="6" fill="#a8ecea" stroke="#fff" stroke-width="1"/><rect x="870.2" y="494.5" width="133.7" height="6" fill="#f45b5b" stroke="#fff" stroke-width="1"/><rect x="870.2" y="510.5" width="336.0" height="6" fill="#a8ecea" stroke="#fff" stroke-width="1"/><rect x="870.2" y="517.5" width="100.0" height="6" fill="#f45b5b" stroke="#fff" stroke-width="1"/><rect x="870.2" y="533.5" width="234.8" height="6" fill="#a8ecea" stroke="#fff" stroke-width="1"/><rect x="870.2" y="540.5" width="167.4" height="6" fill="#f45b5b" stroke="#fff" stroke-width="1"/><rect x="870.2" y="556.5" width="302.3" height="6" fill="#a8ecea" stroke="#fff" stroke-width="1"/><rect x="870.2" y="563.5" width="100.0" height="6" fill="#f45b5b" stroke="#fff" stroke-width="1"/><rect x="870.2" y="579.5" width="369.7" height="6" fill="#a8ecea" stroke="#fff" stroke-width="1"/><rect x="870.2" y="586.5" width="32.5" height="6" fill="#f45b5b" stroke="#fff" stroke-width="1"/><rect x="870.2" y="602.5" width="268.6" height="6" fill="#a8ecea" stroke="#fff" stroke-width="1"/><rect x="870.2" y="609.5" width="66.2" height="6" fill="#f45b5b" stroke="#fff" stroke-width="1"/><rect x="870.2" y="625.5" width="234.8" height="6" fill="#a8ecea" stroke="#fff" stroke-width="1"/><rect x="870.2" y="632.5" width="100.0" height="6" fill="#f45b5b" stroke="#fff" stroke-width="1"/><rect x="870.2" y="648.5" width="234.8" height="6" fill="#a8ecea" stroke="#fff" stroke-width="1"/><rect x="870.2" y="655.5" width="100.0" height="6" fill="#f45b5b" stroke="#fff" stroke-width="1"/><rect x="870.2" y="670.5" width="268.6" height="6" fill="#a8ecea" stroke="#fff" stroke-width="1"/><rect x="870.2" y="677.5" width="66.2" height="6" fill="#f45b5b" stroke="#fff" stroke-width="1"/><rect x="870.2" y="693.5" width="234.8" height="6" fill="#a8ecea" stroke="#fff" stroke-width="1"/><rect x="870.2" y="700.5" width="32.5" height="6" fill="#f45b5b" stroke="#fff" stroke-width="1"/><rect x="870.2" y="716.5" width="167.4" height="6" fill="#a8ecea" stroke="#fff" stroke-width="1"/><rect x="870.2" y="723.5" width="66.2" height="6" fill="#f45b5b" stroke="#fff" stroke-width="1"/><rect x="870.2" y="739.5" width="133.7" height="6" fill="#a8ecea" stroke="#fff" stroke-width="1"/><rect x="870.2" y="746.5" width="100.0" height="6" fill="#f45b5b" stroke="#fff" stroke-width="1"/><rect x="870.2" y="762.5" width="167.4" height="6" fill="#a8ecea" stroke="#fff" stroke-width="1"/><rect x="870.2" y="769.5" width="32.5" height="6" fill="#f45b5b" stroke="#fff" stroke-width="1"/><rect x="870.2" y="785.5" width="201.1" height="6" fill="#a8ecea" stroke="#fff" stroke-width="1"/><rect x="870.2" y="808.5" width="100.0" height="6" fill="#a8ecea" stroke="#fff" stroke-width="1"/><rect x="870.2" y="815.5" width="32.5" height="6" fill="#f45b5b" stroke="#fff" stroke-width="1"/><rect x="870.2" y="831.5" width="66.2" height="6" fill="#a8ecea" stroke="#fff" stroke-width="1"/><rect x="870.2" y="838.5" width="32.5" height="6" fill="#f45b5b" stroke="#fff" stroke-width="1"/><rect x="870.2" y="861.5" width="66.2" height="6" fill="#f45b5b" stroke="#fff" stroke-width="1"/>
<circle cx="1021.3" cy="921.4" r="8.5" fill="#a8ecea"/>
<circle cx="1120.6" cy="921.4" r="8.5" fill="#f45b5b"/>
</svg>
<div class="t pl" style="left:755px;top:417.0px;width:100px;text-align:right">Player (27)</div><div class="t pl" style="left:755px;top:440.0px;width:100px;text-align:right">Player (39)</div><div class="t pl" style="left:755px;top:463.1px;width:100px;text-align:right">Player (23)</div><div class="t pl" style="left:755px;top:486.1px;width:100px;text-align:right">Player (34)</div><div class="t pl" style="left:755px;top:509.1px;width:100px;text-align:right">Player (17)</div><div class="t pl" style="left:755px;top:532.2px;width:100px;text-align:right">Player (4)</div><div class="t pl" style="left:755px;top:555.2px;width:100px;text-align:right">Player (1)</div><div class="t pl" style="left:755px;top:578.2px;width:100px;text-align:right">Player (8)</div><div class="t pl" style="left:755px;top:601.3px;width:100px;text-align:right">Player (7)</div><div class="t pl" style="left:755px;top:624.3px;width:100px;text-align:right">Player (11)</div><div class="t pl" style="left:755px;top:647.3px;width:100px;text-align:right">Player (25)</div><div class="t pl" style="left:755px;top:670.3px;width:100px;text-align:right">Player (180)</div><div class="t pl" style="left:755px;top:693.4px;width:100px;text-align:right">Player (22)</div><div class="t pl" style="left:755px;top:716.4px;width:100px;text-align:right">Player (9)</div><div class="t pl" style="left:755px;top:739.4px;width:100px;text-align:right">Player (5)</div><div class="t pl" style="left:755px;top:762.5px;width:100px;text-align:right">Player (6)</div><div class="t pl" style="left:755px;top:785.5px;width:100px;text-align:right">Player (20)</div><div class="t pl" style="left:755px;top:808.5px;width:100px;text-align:right">Player (3)</div><div class="t pl" style="left:755px;top:831.6px;width:100px;text-align:right">Player (43)</div><div class="t pl" style="left:755px;top:854.6px;width:100px;text-align:right">Player (21)</div><div class="t al" style="left:849.5px;top:880px;width:40px;text-align:center">0</div><div class="t al" style="left:916.9px;top:880px;width:40px;text-align:center">2</div><div class="t al" style="left:984.4px;top:880px;width:40px;text-align:center">4</div><div class="t al" style="left:1051.8px;top:880px;width:40px;text-align:center">6</div><div class="t al" style="left:1119.3px;top:880px;width:40px;text-align:center">8</div><div class="t al" style="left:1186.7px;top:880px;width:40px;text-align:center">10</div><div class="t al" style="left:1254.1px;top:880px;width:40px;text-align:center">12</div><div class="t al" style="left:1321.6px;top:880px;width:40px;text-align:center">14</div><div class="t al" style="left:1389.0px;top:880px;width:40px;text-align:center">16</div><div class="t al" style="left:1437.5px;top:880px;width:40px;text-align:right">18</div>
<div class="t" style="left:775px;top:642.5px;width:0;height:0"><div style="position:absolute;left:-40px;top:-8px;width:80px;text-align:center;transform:rotate(-90deg);font-size:12px;font-weight:bold;color:#fff;line-height:16px">Players</div></div>
<div class="t" style="left:1034.5px;top:912.5px;font-size:18px;font-weight:bold;color:#ccc;letter-spacing:-0.3px;line-height:20px">Spiked</div>
<div class="t" style="left:1134.5px;top:912.5px;font-size:18px;font-weight:bold;color:#ccc;letter-spacing:-0.4px;line-height:20px">Spiked Ball</div>

</body></html>
